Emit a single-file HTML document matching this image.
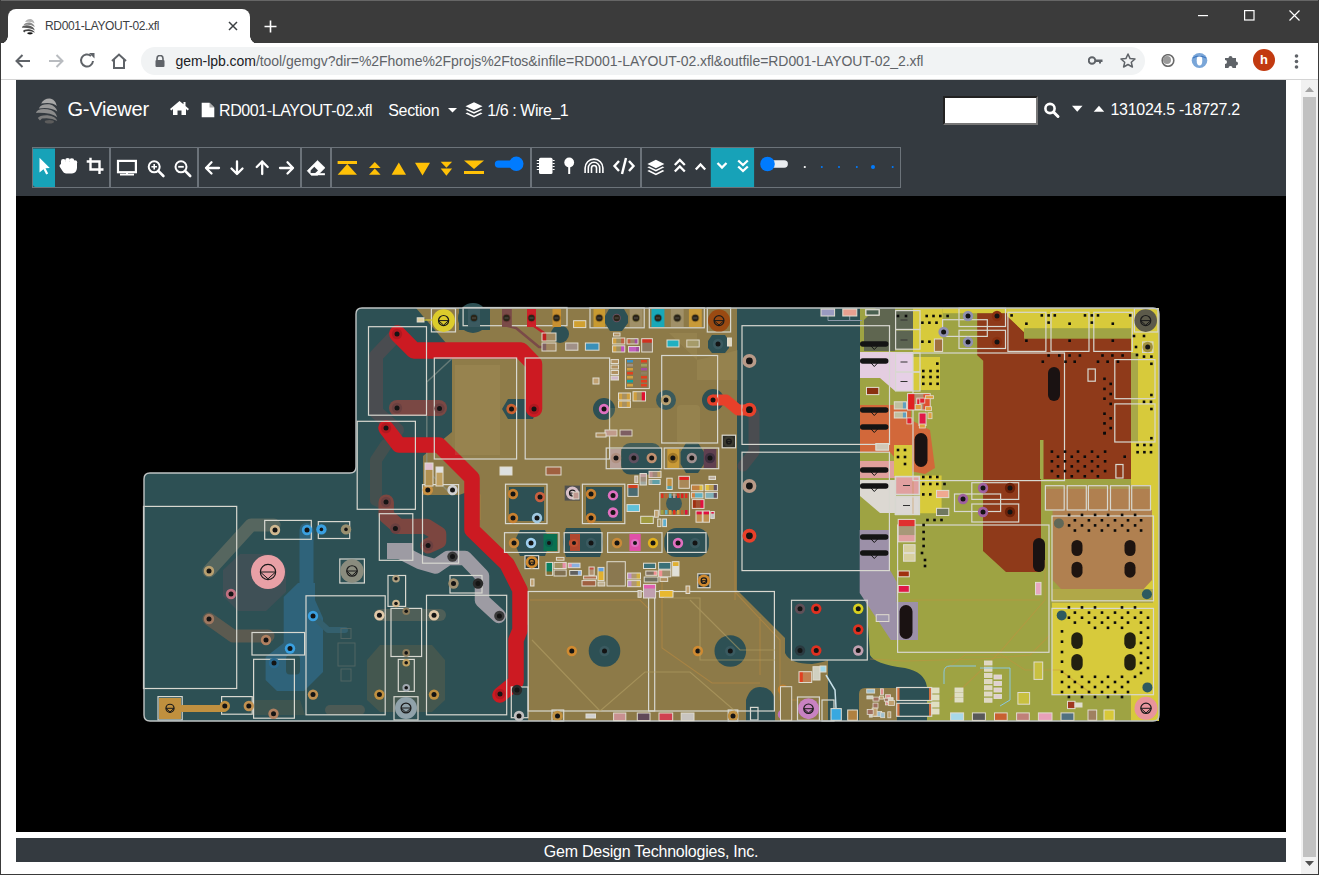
<!DOCTYPE html>
<html><head><meta charset="utf-8">
<style>
*{margin:0;padding:0;box-sizing:border-box}
html,body{width:1319px;height:875px;overflow:hidden;background:#fff;font-family:"Liberation Sans",sans-serif}
.a{position:absolute}
#frame{position:absolute;left:0;top:0;width:1319px;height:875px;border:1px solid #3a3a3a;border-top:none;pointer-events:none}
#tabbar{position:absolute;left:0;top:0;width:1319px;height:43px;background:#3b3b3b;border-top:1px solid #666}
#tab{position:absolute;left:8px;top:8px;width:242px;height:35px;background:#fff;border-radius:8px 8px 0 0}
#tab:before,#tab:after{content:"";position:absolute;bottom:0;width:8px;height:8px;background:radial-gradient(circle at 0 0,transparent 8px,#fff 8.5px)}
#tab:before{left:-8px;background:radial-gradient(circle at 0 0,transparent 7.5px,#fff 8px)}
#tab:after{right:-8px;background:radial-gradient(circle at 100% 0,transparent 7.5px,#fff 8px)}
#toolbar{position:absolute;left:0;top:43px;width:1319px;height:37px;background:#fff;border-bottom:1px solid #d4d4d4}
#omni{position:absolute;left:141px;top:4px;width:1004px;height:28px;background:#f1f3f4;border-radius:14px}
#url{position:absolute;left:34.5px;top:6px;font-size:14px;color:#5f6368;white-space:nowrap;letter-spacing:-0.05px}
#url b{font-weight:normal;color:#202124}
#app{position:absolute;left:16px;top:80px;width:1270px;height:116px;background:#343a40;color:#fff}
#canvas{position:absolute;left:16px;top:196px;width:1270px;height:636px;background:#000;overflow:hidden}
#footer{position:absolute;left:16px;top:838px;width:1270px;height:24px;background:#343a40;color:#fff;font-size:16px;text-align:center;line-height:24px;letter-spacing:-0.23px}
#sb{position:absolute;left:1301px;top:80px;width:17px;height:794px;background:#f1f1f1}
#thumb{position:absolute;left:1303px;top:97px;width:13px;height:760px;background:#c1c1c1}
.t{position:absolute;white-space:nowrap}
#tb{position:absolute;left:32px;top:147px;width:869px;height:41px;border:1px solid #6c737a}
.grp{position:absolute;top:0;height:39px;border-left:1px solid #6c737a}
.act{position:absolute;top:0;height:39px;background:#17a2b8}
</style></head>
<body>
<div id="tabbar">
  <div id="tab">
    <svg class="a" style="left:7px;top:4px" width="30" height="28" viewBox="0 0 30 28">
      <path d="M10,9 Q12,5.5 16,6 Q19,7 19.5,10.5 Q17,8 10,9 Z" fill="#b4b4b4"/>
      <path d="M8.6,12 Q10,9 15,9.5 Q19,10.5 19.8,14 Q16,11 8.6,12 Z" fill="#8a8a8a"/>
      <path d="M6.9,14.8 Q7.5,11.8 14,12.5 Q19,13.5 19.8,17.5 Q16,14.5 6.9,14.8 Z" fill="#5a5a5a"/>
      <path d="M8,18 Q9,16 14,16.2 Q19,16.8 19.8,19.8 Q16,17.5 10.5,18.3 L9.3,19.5 Z" fill="#444"/>
      <ellipse cx="15" cy="20.3" rx="2.8" ry="1.1" fill="#151515"/>
    </svg>
    <div class="t" style="left:37px;top:10px;font-size:12px;color:#3c4043;letter-spacing:-0.34px">RD001-LAYOUT-02.xfl</div>
    <svg class="a" style="left:220px;top:12px" width="10" height="10" viewBox="0 0 10 10"><path d="M1,1 L9,9 M9,1 L1,9" stroke="#3c4043" stroke-width="1.5"/></svg>
  </div>
  <svg class="a" style="left:264px;top:19px" width="13" height="13" viewBox="0 0 13 13"><path d="M6.5,0.5 V12.5 M0.5,6.5 H12.5" stroke="#fff" stroke-width="1.6"/></svg>
  <svg class="a" style="left:1198px;top:13px" width="10" height="3"><rect x="0" y="1" width="10" height="1.2" fill="#fff"/></svg>
  <svg class="a" style="left:1244px;top:9px" width="11" height="11"><rect x="0.6" y="0.6" width="9.4" height="9.4" fill="none" stroke="#fff" stroke-width="1.2"/></svg>
  <svg class="a" style="left:1289px;top:9px" width="11" height="11"><path d="M0.5,0.5 L10.5,10.5 M10.5,0.5 L0.5,10.5" stroke="#fff" stroke-width="1.2"/></svg>
</div>
<div id="toolbar">
  <svg class="a" style="left:14px;top:10px" width="18" height="16" viewBox="0 0 18 16"><path d="M16,8 H2.5 M8.5,2 L2.5,8 L8.5,14" fill="none" stroke="#5f6368" stroke-width="2"/></svg>
  <svg class="a" style="left:47px;top:10px" width="18" height="16" viewBox="0 0 18 16"><path d="M2,8 H15.5 M9.5,2 L15.5,8 L9.5,14" fill="none" stroke="#b9bcc0" stroke-width="2"/></svg>
  <svg class="a" style="left:79px;top:9px" width="17" height="17" viewBox="0 0 17 17"><path d="M14,9 A6,6 0 1 1 12,4" fill="none" stroke="#5f6368" stroke-width="2"/><path d="M10,1 L15.5,1 L15.5,6.5 Z" fill="#5f6368"/></svg>
  <svg class="a" style="left:110px;top:9px" width="18" height="18" viewBox="0 0 18 18"><path d="M2,9 L9,2.5 L16,9 M4,7.5 V16 H14 V7.5" fill="none" stroke="#5f6368" stroke-width="2" stroke-linejoin="miter"/></svg>
  <div id="omni">
    <svg class="a" style="left:13.5px;top:8px" width="10" height="12" viewBox="0 0 10 12"><path d="M2,5 V3.5 A3,3 0 0 1 8,3.5 V5" fill="none" stroke="#5f6368" stroke-width="1.6"/><rect x="0.5" y="5" width="9" height="7" rx="1" fill="#5f6368"/></svg>
    <div id="url"><b>gem-lpb.com</b>/tool/gemgv?dir=%2Fhome%2Fprojs%2Ftos&amp;infile=RD001-LAYOUT-02.xfl&amp;outfile=RD001-LAYOUT-02_2.xfl</div>
    <svg class="a" style="left:947px;top:9px" width="15" height="9" viewBox="0 0 15 9"><circle cx="4" cy="4.5" r="3.3" fill="none" stroke="#5f6368" stroke-width="2"/><path d="M7,3.5 H14.5 V6 H13 V7.5 H11 V6 H7Z" fill="#5f6368"/></svg>
    <svg class="a" style="left:979px;top:6px" width="16" height="15" viewBox="0 0 16 15"><path d="M8,1 L10.1,5.6 L15,6 L11.3,9.3 L12.4,14 L8,11.5 L3.6,14 L4.7,9.3 L1,6 L5.9,5.6 Z" fill="none" stroke="#5f6368" stroke-width="1.5" stroke-linejoin="round"/></svg>
  </div>
  <svg class="a" style="left:1161px;top:11px" width="14" height="13" viewBox="0 0 14 13"><circle cx="7" cy="6.5" r="5.8" fill="none" stroke="#6a6a6a" stroke-width="1.6"/><circle cx="6" cy="6" r="4" fill="#9a9a9a"/></svg>
  <svg class="a" style="left:1191px;top:9px" width="17" height="17" viewBox="0 0 17 17"><ellipse cx="8.5" cy="8.5" rx="7.8" ry="7.5" fill="#7aa6d8"/><ellipse cx="8.5" cy="8.5" rx="2.8" ry="5" fill="#fff"/><path d="M2,6 Q8,2 15,6" fill="none" stroke="#3f78c0" stroke-width="1.2"/></svg>
  <svg class="a" style="left:1224px;top:10px" width="16" height="16" viewBox="0 0 16 16"><path d="M1,5 H4.5 A2,2 0 1 1 8.5,5 H12 V8.5 A2,2 0 1 1 12,12.5 V15 H8.5 A2,2 0 1 0 4.5,15 H1 V11 A2,2 0 1 0 1,7Z" fill="#5f6368"/></svg>
  <div class="a" style="left:1253px;top:6px;width:22px;height:22px;border-radius:11px;background:#c23a10;color:#fff;font-size:13px;font-weight:bold;text-align:center;line-height:22px">h</div>
  <svg class="a" style="left:1294px;top:11px" width="5" height="15" viewBox="0 0 5 15"><circle cx="2.5" cy="2" r="1.8" fill="#5f6368"/><circle cx="2.5" cy="7.5" r="1.8" fill="#5f6368"/><circle cx="2.5" cy="13" r="1.8" fill="#5f6368"/></svg>
</div>
<div id="app">
<svg class="a" style="left:0;top:0" width="70" height="50" viewBox="0 0 70 50">
 <g transform="translate(20,18.5) scale(1.65,1.62) translate(-6.9,-5.9)">
      <path d="M10,9 Q12,5.5 16,6 Q19,7 19.5,10.5 Q17,8 10,9 Z" fill="#a8a8a8"/>
      <path d="M8.6,12 Q10,9 15,9.5 Q19,10.5 19.8,14 Q16,11 8.6,12 Z" fill="#9a9a9a"/>
      <path d="M6.9,14.8 Q7.5,11.8 14,12.5 Q19,13.5 19.8,17.5 Q16,14.5 6.9,14.8 Z" fill="#8c8c8c"/>
      <path d="M8,18 Q9,16 14,16.2 Q19,16.8 19.8,19.8 Q16,17.5 10.5,18.3 L9.3,19.5 Z" fill="#7c7c7c"/>
      <ellipse cx="15" cy="20.3" rx="2.8" ry="1.1" fill="#5c5c5c"/>
 </g>
</svg>
<div class="t" style="left:51.5px;top:17.6px;font-size:20px;line-height:23px;color:#fff;letter-spacing:-0.2px">G-Viewer</div>
<div class="t" style="left:203px;top:21.5px;font-size:16px;line-height:18.4px;color:#fff;letter-spacing:-0.4px">RD001-LAYOUT-02.xfl</div>
<div class="t" style="left:372.3px;top:21.5px;font-size:16px;line-height:18.4px;color:#fff;letter-spacing:-0.35px">Section</div>
<div class="t" style="left:471.3px;top:21.5px;font-size:16px;line-height:18.4px;color:#fff;letter-spacing:-0.44px">1/6 : Wire_1</div>
<div class="t" style="left:1094.5px;top:21.3px;font-size:16px;line-height:18.4px;color:#fff;letter-spacing:-0.3px">131024.5 -18727.2</div>
<div class="a" style="left:926.5px;top:15.5px;width:95.5px;height:29.5px;background:#fff;border-top:2px solid #222;border-left:2px solid #222;border-bottom:2px solid #777;border-right:2px solid #777"></div>
<svg class="a" style="left:0;top:0" width="1270" height="116" viewBox="0 0 1270 116">
 <!-- header icons -->
 <path d="M163.5,21 L154,29 L155.3,30.5 L157,29.1 V35 H161.5 V30.5 H165.5 V35 H170 V29.1 L171.7,30.5 L173,29 L169.5,26 V22 H167.5 V24.3Z" fill="#fff"/>
 <path d="M185.7,22.7 H193.5 L198.3,27.5 V37.3 H185.7Z" fill="#fff"/><path d="M193.5,22.7 V27.5 H198.3" fill="#aaa" />
 <path d="M432,28 H441 L436.5,32.5Z" fill="#fff"/>
 <path d="M458,22.3 L466.5,26.3 L458,30.3 L449.5,26.3Z" fill="#fff"/>
 <path d="M451.2,28.9 L449.5,29.8 L458,33.8 L466.5,29.8 L464.8,28.9 L458,32.1Z" fill="#fff"/>
 <path d="M451.2,32.5 L449.5,33.4 L458,37.4 L466.5,33.4 L464.8,32.5 L458,35.7Z" fill="#fff"/>
 <circle cx="1034" cy="28.5" r="4.6" fill="none" stroke="#fff" stroke-width="2.6"/><path d="M1037.5,32 L1042,36.5" stroke="#fff" stroke-width="3" stroke-linecap="round"/>
 <path d="M1056,25.7 H1066.5 L1061.25,31.7Z" fill="#fff"/>
 <path d="M1077.7,31.7 H1088.2 L1083,25.7Z" fill="#fff"/>

 <!-- toolbar frame -->
 <rect x="16.5" y="67.5" width="868" height="40" fill="none" stroke="#6c737a" stroke-width="1"/>
 <path d="M17,68.5 H39 V107 H19.5 Q17,107 17,104.5 Z" fill="#17a2b8"/>
 <rect x="694.8" y="68" width="43.3" height="39" fill="#17a2b8"/>
 <g stroke="#6c737a" stroke-width="1">
  <path d="M93.5,67.5 V107.5 M94.5,67.5 V107.5 M181.5,67.5 V107.5 M182.5,67.5 V107.5 M284.5,67.5 V107.5 M285.5,67.5 V107.5 M314.5,67.5 V107.5 M315.5,67.5 V107.5 M514.5,67.5 V107.5 M515.5,67.5 V107.5 M624.5,67.5 V107.5 M625.5,67.5 V107.5"/>
 </g>
 <g fill="#fff">
  <!-- cursor -->
  <path d="M23.5,77.7 L33.8,88 L29.5,88.3 L32.2,93.5 L30.2,94.5 L27.5,89.2 L23.5,92.5Z"/>
  <!-- hand -->
  <circle cx="47.3" cy="81.3" r="2.3"/><circle cx="51.6" cy="80.4" r="2.4"/><circle cx="55.8" cy="80.6" r="2.4"/><circle cx="59" cy="82.3" r="2.1"/>
  <path d="M45,81.5 H61 V88 Q60.5,93.4 56,93.4 H50 Q47.5,93.4 46.5,91 L43.6,86.5 Q43,84.5 45,84 Z"/>
  </g>
 <g fill="none" stroke="#fff" stroke-width="2.4">
  <!-- crop -->
  <path d="M74.5,77.7 V89.5 H87.5 M70.7,81.5 H83.5 V94"/>
  <!-- desktop -->
  <rect x="102" y="80.9" width="17.9" height="11.3" stroke-width="2.2"/>
 </g>
 <rect x="104" y="93.7" width="14" height="1.8" fill="#fff"/><rect x="110" y="92" width="2" height="2" fill="#fff"/>
 <g fill="none" stroke="#fff" stroke-width="2">
  <circle cx="138.2" cy="86.8" r="5.5"/><path d="M142.3,90.9 L147.4,96" stroke-width="2.6" stroke-linecap="round"/>
  <path d="M135.4,86.8 H141 M138.2,84 V89.6" stroke-width="1.6"/>
  <circle cx="165" cy="86.8" r="5.5"/><path d="M169.1,90.9 L174.2,96" stroke-width="2.6" stroke-linecap="round"/>
  <path d="M162.2,86.8 H167.8" stroke-width="1.8"/>
 </g>
 <g fill="none" stroke="#fff" stroke-width="2.3" stroke-linecap="round" stroke-linejoin="round">
  <path d="M203,88 H190 M195.5,82.3 L190,88 L195.5,93.5"/>
  <path d="M221,81.5 V94 M215.5,88.5 L221,94 L226.5,88.5"/>
  <path d="M246.2,94 V81.5 M240.7,87 L246.2,81.5 L251.7,87"/>
  <path d="M264,88 H277 M271.5,82.3 L277,88 L271.5,93.5"/>
 </g>
 <!-- eraser -->
 <path d="M301.5,80.4 L309,87.8 L301.6,95.2 L295.3,95.2 L291.2,90.8 Z" fill="#fff" stroke="#fff" stroke-width="0.6" stroke-linejoin="round"/>
 <path d="M298.3,86.8 L302,90.6 L299,93.3 L294.6,93.3 L294.6,90.6 Z" fill="#343a40"/>
 <rect x="295" y="93.2" width="13.9" height="2" fill="#fff"/>
 <!-- yellow group -->
 <g fill="#ffc107">
  <rect x="321.6" y="81" width="19.4" height="3"/><path d="M331.3,84 L341,94.7 H321.6Z"/>
  <path d="M358.8,82 L364.6,88 H353Z"/><path d="M358.8,88.5 L364.6,94.7 H353Z"/>
  <path d="M382.8,82.5 L390,94.7 H375.6Z"/>
  <path d="M399,82.7 H414 L406.5,95.4Z"/>
  <path d="M424.7,81.8 H436.1 L430.4,87.8Z"/><path d="M424.7,88.6 H436.1 L430.4,95.8Z"/>
  <path d="M448,80.4 H468 L458,89 Z"/><rect x="448" y="91" width="20" height="3"/>
 </g>
 <rect x="478.8" y="80.4" width="21" height="7.3" rx="3.6" fill="#007bff"/><circle cx="500.3" cy="83.8" r="7.2" fill="#007bff"/>
 <!-- chip -->
 <rect x="523" y="77.7" width="13.5" height="16.3" rx="1.5" fill="#fff"/>
 <g stroke="#fff" stroke-width="1.2"><path d="M520.8,80.5 H523 M520.8,83.5 H523 M520.8,86.5 H523 M520.8,89.5 H523 M536.5,80.5 H538.6 M536.5,83.5 H538.6 M536.5,86.5 H538.6 M536.5,89.5 H538.6"/></g>
 <!-- pin -->
 <circle cx="553.2" cy="82.5" r="4.9" fill="#fff"/><rect x="552.2" y="86.5" width="2" height="7.5" fill="#fff"/>
 <!-- rainbow -->
 <g fill="none" stroke="#fff" stroke-width="1.6">
  <path d="M569.1,93.1 V88 A8.9,8.9 0 0 1 586.9,88 V93.1"/>
  <path d="M572.3,93.1 V88 A5.7,5.7 0 0 1 583.7,88 V93.1"/>
  <path d="M575.5,93.1 V88 A2.5,2.5 0 0 1 580.5,88 V93.1"/>
 </g>
 <!-- code -->
 <g fill="none" stroke="#fff" stroke-width="2.4" stroke-linejoin="miter">
  <path d="M603,81 L598.5,86 L603,91"/><path d="M613,81 L617.5,86 L613,91"/><path d="M610,78 L606,94"/>
 </g>
 <!-- layers -->
 <path d="M639.9,79.7 L648.4,84 L639.9,88.3 L631.4,84Z" fill="#fff"/>
 <path d="M633.1,86.4 L631.3,87.3 L639.9,91.6 L648.4,87.3 L646.6,86.4 L639.9,89.8Z" fill="#fff"/>
 <path d="M633.1,90 L631.3,90.9 L639.9,95.2 L648.4,90.9 L646.6,90 L639.9,93.4Z" fill="#fff"/>
 <g fill="none" stroke="#fff" stroke-width="2.3" stroke-linejoin="miter">
  <path d="M658.8,85 L663.8,80 L668.8,85 M658.8,91.5 L663.8,86.5 L668.8,91.5"/>
  <path d="M679.8,89.5 L684.5,84.5 L689.2,89.5"/>
  <path d="M701.5,83 L706,87.5 L710.5,83"/>
  <path d="M722.2,80.5 L727,85 L731.8,80.5 M722.2,86.5 L727,91 L731.8,86.5"/>
 </g>
 <rect x="750.9" y="80.3" width="21" height="7.5" rx="3.7" fill="#e9ecef"/><circle cx="751.5" cy="84" r="7.3" fill="#007bff"/>
 <circle cx="788.8" cy="87" r="1.1" fill="#fff"/>
 <g fill="#007bff"><circle cx="805.8" cy="87" r="1"/><circle cx="823" cy="87" r="1"/><circle cx="840.8" cy="87" r="1"/><circle cx="857" cy="87" r="2"/><circle cx="876.7" cy="87" r="1"/></g>
</svg>

</div>
<div id="canvas"></div>
<svg id="pcb" width="1319" height="875" viewBox="0 0 1319 875" style="position:absolute;left:0;top:0">
<path d="M362,308 L1153,308 Q1159,308 1159,314 L1159,715 Q1159,721 1153,721 L150,721 Q144,721 144,715 L144,479 Q144,473 150,473 L350,473 Q356,473 356,467 L356,314 Q356,308 362,308 Z" fill="#2d5054" stroke="none" stroke-width="0" />
<path d="M209,571 L251,525 L274,525" fill="none" stroke="#56665f" stroke-width="13" stroke-linecap="round" stroke-linejoin="round" opacity="1"/>
<path d="M209,619 L233,636 L268,636" fill="none" stroke="#5b5a50" stroke-width="13" stroke-linecap="round" stroke-linejoin="round" opacity="1"/>
<polygon points="240,554 272,554 286,568 286,592 266,611 238,611 223,596 223,570" fill="#3f5056" />
<path d="M306.5,530 L306.5,586 L291,601 L291,640" fill="none" stroke="#2f637a" stroke-width="14" stroke-linecap="round" stroke-linejoin="round" opacity="1"/>
<path d="M298,583 L315,583 L315,600 L323,618 L323,672 L304,691 L277,691 L265.6,680 L265.6,657 L283.7,643 L283.7,597 Z" fill="#2f637a"/>
<rect x="286" y="655" width="14" height="19.5" fill="#2d5054" rx="4"/>
<polygon points="380,645 432,645 445,660 445,700 432,712 380,712 367,700 367,660" fill="#44574f" />
<path d="M313,616 L328,630 L345,630" fill="none" stroke="#34606e" stroke-width="6" stroke-linecap="round" stroke-linejoin="round" opacity="1"/>
<path d="M397,334 L376,356 L376,412 L397,430" fill="none" stroke="#4a4c50" stroke-width="14" stroke-linecap="round" stroke-linejoin="round" opacity="1"/>
<path d="M386,445 L376,460 L376,500 L386,505" fill="none" stroke="#44504f" stroke-width="12" stroke-linecap="round" stroke-linejoin="round" opacity="1"/>
<path d="M330,710 L360,710" fill="none" stroke="#4c5a55" stroke-width="10" stroke-linecap="round" stroke-linejoin="round" opacity="1"/>
<polygon points="250,700 300,700 305,715 250,715" fill="#3e5550" />
<path d="M416,308 L737,308 L737,590 L785,638 L785,653 Q790,664 812,664 Q825,662 828,660 L828,721 L528,721 L528,625 L516,621 L520,590 L507,564 L472,530 L473,490 L459,495 L423,495 L423,456 L452,432 L452,350 Z" fill="#8d7a48" stroke="none" stroke-width="0" />
<polygon points="452,360 516,360 516,458 452,458" fill="#8f7c49" />
<circle cx="473" cy="318" r="15" fill="#2d5054" />
<rect x="459" y="308" width="31" height="22" fill="#2d5054" />
<path d="M508,399 L533,399 L537,409 L533,419 L508,419 L502,409 Z" fill="#2d5054" stroke="none" stroke-width="0" />
<circle cx="604" cy="409" r="11" fill="#2d5054" />
<circle cx="666" cy="400" r="10" fill="#3a5a5c" />
<circle cx="713" cy="400" r="11" fill="#2d5054" />
<path d="M712,335 L725,335 L729,341 L729,348 L725,353 L712,353 L708,348 L708,341 Z" fill="#2d5054" stroke="none" stroke-width="0" />
<circle cx="560" cy="334" r="9" fill="#2d5054" />
<rect x="610" y="449" width="11.2" height="19" fill="#b8a098" />
<rect x="621.2" y="443" width="40.1" height="31.6" fill="#2d5054" rx="9"/>
<rect x="667.3" y="449" width="11.9" height="19" fill="#c89a38" />
<path d="M686,443 L698,443 L704,452 L704,464 L698,473 L686,473 L680.6,464 L680.6,452 Z" fill="#2d5054" stroke="none" stroke-width="0" />
<rect x="703.7" y="449" width="12.6" height="19" fill="#604050" />
<rect x="509" y="487" width="35" height="34" fill="#2d5054" />
<rect x="586" y="487" width="36" height="34" fill="#2d5054" />
<path d="M520,530 L545,530 L550,542 L545,556 L520,556 L514,542 Z" fill="#2d5054" stroke="none" stroke-width="0" />
<path d="M566,528 L600,528 Q606,542 600,557 L566,557 Q560,542 566,528 Z" fill="#2d5054" stroke="none" stroke-width="0" />
<rect x="664.3" y="528" width="44.6" height="29" fill="#2d5054" rx="12"/>
<circle cx="604.5" cy="651" r="15.8" fill="#2d5054" />
<circle cx="730.3" cy="651" r="15.8" fill="#2d5054" />
<path d="M746,721 L746,700 Q750,687 760,687 Q772,687 775,700 L775,721 Z" fill="#2d5054" stroke="none" stroke-width="0" />
<rect x="426" y="498" width="30" height="64" fill="#2d5054" />
<path d="M863,308 L1159,308 L1159,721 L927,721 L927,687 Q925,672 905,668 Q874,664 870,655 L866,596 L860,580 L860,308 Z" fill="#9ea343" stroke="none" stroke-width="0" />
<path d="M859,721 L859,694 Q859,688 865,688 L897,688 L897,721 Z" fill="#8d7a48" stroke="none" stroke-width="0" />
<polygon points="876,308 895,308 895,351 864,351 864,320" fill="#5f6650" />
<polygon points="860,352 913,352 913,391 895,391 880,378 860,378" fill="#e4cde0" />
<polygon points="860,405 911,405 911,420 930,430 935,468 925,474 905,470 890,452 860,452" fill="#d2683a" />
<polygon points="860,461 900,461 905,470 905,478 860,478" fill="#e0a09c" />
<polygon points="860,480 896,480 896,513 880,513 860,496" fill="#dcd8d2" />
<polygon points="859.7,530 889.9,530 889.9,570 896.7,582 896.7,602 918,602 918,640 890.8,640 859.7,593" fill="#9c90a8" />
<rect x="913" y="308" width="29.6" height="44" fill="#d7ca3b" />
<rect x="942.6" y="308" width="64.6" height="5.2" fill="#d7ca3b" />
<rect x="895.7" y="310.6" width="17.3" height="18.9" fill="#5c6552" />
<rect x="895.7" y="330.5" width="17.3" height="19.0" fill="#5c6552" />
<rect x="895.7" y="353" width="17.3" height="18.5" fill="#e6d0e6" />
<rect x="895.7" y="372.5" width="17.3" height="18.5" fill="#e6d0e6" />
<path d="M900.5,320 H907.5 M900.5,340 H907.5 M900.5,362 H907.5 M900.5,381.5 H907.5" stroke="#333" stroke-width="1"/>
<rect x="913" y="357" width="27" height="33" fill="#d7ca3b" />
<polygon points="894,445 912,445 912,475.6 941.6,475.6 941.6,513.3 919.5,513.3 919.5,476 894,476" fill="#d7ca3b" />
<rect x="895.6" y="476.4" width="23.9" height="18.1" fill="#e0a0a0" />
<rect x="895.6" y="496.2" width="23.9" height="18.4" fill="#dcd8d4" />
<rect x="895.6" y="476.4" width="23.9" height="18.1" fill="none" stroke="#d8d8d0" stroke-width="1.2"/>
<rect x="895.6" y="496.2" width="23.9" height="18.4" fill="none" stroke="#d8d8d0" stroke-width="1.2"/>
<path d="M903,485.5 H910 M903,505.5 H910" stroke="#333" stroke-width="1"/>
<polygon points="977.2,313.2 1007.2,313.2 1007.2,316 1024,332 1024,338.4 1131,338.4 1131,479 1041,479 1041,572 1006,572 983,551 983.2,360.8 977.2,355.2" fill="#8f3a1a" />
<polygon points="1007.2,308 1159,308 1159,353 1131,353 1131,328.4 1024,328.4 1024,332 1007.2,316" fill="#d7ca3b" />
<rect x="1024" y="328.4" width="107" height="10.0" fill="#a0a444" />
<rect x="1131" y="353" width="28" height="126" fill="#d7ca3b" />
<rect x="1131" y="353" width="7" height="89" fill="#a8a848" />
<rect x="1131" y="479" width="28" height="242" fill="#d7ca3b" />
<rect x="1041" y="479" width="11.6" height="121" fill="#9ea343" />
<rect x="1045" y="485" width="106" height="25" fill="#b08050" />
<rect x="1045" y="485" width="106" height="4" fill="#a89850" />
<polygon points="1052.6,510 1152,510 1152,580 1143,589.7 1061.7,589.7 1052.6,580" fill="#b08050" />
<rect x="1052" y="603" width="101" height="91" fill="#d7ca3b" />
<rect x="1052" y="589" width="101" height="14" fill="#b0a848" />
<rect x="914.5" y="433.0" width="13" height="34" rx="6.5" fill="#1a1212"/>
<rect x="1048.0" y="367.0" width="12" height="34" rx="6.0" fill="#1a1212"/>
<rect x="1033.0" y="538.0" width="12" height="34" rx="6.0" fill="#1a1212"/>
<rect x="899.5" y="605.0" width="13" height="34" rx="6.5" fill="#1a1212"/>
<rect x="1071.5" y="540" width="11" height="16" rx="5.5" fill="#1e1410"/>
<rect x="1071.5" y="561.7" width="11" height="16" rx="5.5" fill="#1e1410"/>
<rect x="1071.3" y="632.3000000000001" width="11.4" height="16.6" rx="5.7" fill="#222010"/>
<rect x="1071.3" y="654.0" width="11.4" height="16.6" rx="5.7" fill="#222010"/>
<rect x="1124.5" y="540" width="11" height="16" rx="5.5" fill="#1e1410"/>
<rect x="1124.5" y="561.7" width="11" height="16" rx="5.5" fill="#1e1410"/>
<rect x="1124.3" y="632.3000000000001" width="11.4" height="16.6" rx="5.7" fill="#222010"/>
<rect x="1124.3" y="654.0" width="11.4" height="16.6" rx="5.7" fill="#222010"/>
<rect x="860" y="341.3" width="28.5" height="5.4" rx="2.7" fill="#141414"/>
<path d="M871,346 L874.3,349.5 L877.6,346" fill="none" stroke="#141414" stroke-width="1"/>
<rect x="860" y="358.3" width="28.5" height="5.4" rx="2.7" fill="#141414"/>
<path d="M871,363 L874.3,366.5 L877.6,363" fill="none" stroke="#141414" stroke-width="1"/>
<rect x="860" y="407.3" width="28.5" height="5.4" rx="2.7" fill="#141414"/>
<path d="M871,412 L874.3,415.5 L877.6,412" fill="none" stroke="#141414" stroke-width="1"/>
<rect x="860" y="424.3" width="28.5" height="5.4" rx="2.7" fill="#141414"/>
<path d="M871,429 L874.3,432.5 L877.6,429" fill="none" stroke="#141414" stroke-width="1"/>
<rect x="860" y="467.3" width="28.5" height="5.4" rx="2.7" fill="#141414"/>
<path d="M871,472 L874.3,475.5 L877.6,472" fill="none" stroke="#141414" stroke-width="1"/>
<rect x="860" y="483.3" width="28.5" height="5.4" rx="2.7" fill="#141414"/>
<path d="M871,488 L874.3,491.5 L877.6,488" fill="none" stroke="#141414" stroke-width="1"/>
<rect x="860" y="534.3" width="28.5" height="5.4" rx="2.7" fill="#141414"/>
<path d="M871,539 L874.3,542.5 L877.6,539" fill="none" stroke="#141414" stroke-width="1"/>
<rect x="860" y="550.3" width="28.5" height="5.4" rx="2.7" fill="#141414"/>
<path d="M871,555 L874.3,558.5 L877.6,555" fill="none" stroke="#141414" stroke-width="1"/>
<path d="M451.5,359 L426.8,382 L426.8,470 L452,495" fill="none" stroke="#8a968e" stroke-width="1.5" opacity="0.6"/>
<g fill="none" stroke="#c89040" stroke-width="1.1" opacity="0.45">
<path d="M870,659 L905,661 L980,659 L1030,655 L1050,635"/>
<path d="M945,670 L965,655 L1002,655 L1025,670 L1060,670 L1100,700"/>
<path d="M950,700 L1000,652 L1045,600 L1045,560"/>
<path d="M735,560 L735,600 M760,617 L760,675 M735,592 L780,640 L780,700 L800,700"/>
<path d="M900,600 L980,600 L1040,600 M913,480 L913,525"/>
<path d="M455,470 L480,495 L480,520 M530,600 L640,600 L650,610 M662,580 L662,648 L712,683 L760,683"/>
</g>
<path d="M508,326 L516,328 L539,347 L545,347" fill="none" stroke="#7a4a48" stroke-width="2.5" stroke-linecap="round" stroke-linejoin="round" opacity="1"/>
<path d="M534,326 L544,333" fill="none" stroke="#c02028" stroke-width="2.5" stroke-linecap="round" stroke-linejoin="round" opacity="1"/>
<path d="M754,414 L754,452 L743,466" fill="none" stroke="#4a4c50" stroke-width="11" stroke-linecap="round" stroke-linejoin="round" opacity="1"/>
<path d="M828,316 V320.5 H862 M849.7,316 V320.5" fill="none" stroke="#8a98a8" stroke-width="1"/>
<path d="M380,615 L440,615" fill="none" stroke="#4f5f58" stroke-width="12" stroke-linecap="round" stroke-linejoin="round" opacity="1"/>
<g fill="none" stroke="#5a6a66" stroke-width="1" opacity="0.8"><rect x="341" y="628.5" width="10" height="10"/><rect x="338" y="643" width="17" height="23"/><rect x="341" y="669" width="10" height="12"/></g>
<path d="M397.3,333.6 L414,350.5 L521,350.5 L534,364 L534,409" fill="none" stroke="#cc1a22" stroke-width="16.5" stroke-linecap="round" stroke-linejoin="round" opacity="1"/>
<path d="M386,428 L399,445 L439,445 L472,478 L472,530 L507,564 L520,590 L520,630 L516,640 L516,682 L500,695" fill="none" stroke="#cc1a22" stroke-width="15.5" stroke-linecap="round" stroke-linejoin="round" opacity="1"/>
<path d="M712.5,400 L726,400 L738,410 L749,410" fill="none" stroke="#e8402a" stroke-width="11" stroke-linecap="round" stroke-linejoin="round" opacity="1"/>
<path d="M397,408 L439,408" fill="none" stroke="#7a4844" stroke-width="16" stroke-linecap="round" stroke-linejoin="round" opacity="1"/>
<path d="M386.2,502.3 L386.2,515.6 L398.5,526.4 L426.3,526.4 L438.6,534 L438.6,541 L428,545.8" fill="none" stroke="#7c4640" stroke-width="15.4" stroke-linecap="round" stroke-linejoin="round" opacity="1"/>
<rect x="387" y="543" width="26" height="16" fill="#9d9ba3" />
<path d="M398.5,551 L420,562 L435.6,566.5 L448,558 L465,558 L482,575.7 L482,600.4 L498.8,615.9" fill="none" stroke="#9d9ba3" stroke-width="14.5" stroke-linecap="round" stroke-linejoin="round" opacity="1"/>
<rect x="368.5" y="326.7" width="58.0" height="88.5" fill="none" stroke="#d8d8d0" stroke-width="1.2"/>
<rect x="357.2" y="421.3" width="58.2" height="88.0" fill="none" stroke="#d8d8d0" stroke-width="1.2"/>
<rect x="434.3" y="358" width="82.3" height="101" fill="none" stroke="#d8d8d0" stroke-width="1.2"/>
<rect x="525.2" y="358" width="84.4" height="101" fill="none" stroke="#d8d8d0" stroke-width="1.2"/>
<rect x="661.7" y="355.5" width="55.9" height="87.5" fill="none" stroke="#d8d8d0" stroke-width="1.2"/>
<rect x="742" y="325.7" width="147.5" height="118.7" fill="none" stroke="#d8d8d0" stroke-width="1.2"/>
<rect x="742" y="452.2" width="147.4" height="118.4" fill="none" stroke="#d8d8d0" stroke-width="1.2"/>
<rect x="463.1" y="307.5" width="103.9" height="18.2" fill="none" stroke="#d8d8d0" stroke-width="1.2"/>
<rect x="431.4" y="308.6" width="24.1" height="23.3" fill="none" stroke="#d8d8d0" stroke-width="1.2"/>
<rect x="590" y="307.8" width="54.2" height="20.0" fill="none" stroke="#d8d8d0" stroke-width="1.2"/>
<rect x="649.3" y="307.8" width="55.0" height="20.0" fill="none" stroke="#d8d8d0" stroke-width="1.2"/>
<rect x="707.3" y="308" width="23.3" height="24" fill="none" stroke="#d8d8d0" stroke-width="1.2"/>
<rect x="606.2" y="448" width="55.5" height="20.7" fill="none" stroke="#d8d8d0" stroke-width="1.2"/>
<rect x="664.2" y="448" width="54.5" height="20.7" fill="none" stroke="#d8d8d0" stroke-width="1.2"/>
<rect x="505.5" y="484.2" width="41.5" height="39.4" fill="none" stroke="#d8d8d0" stroke-width="1.2"/>
<rect x="582.4" y="484.2" width="42.4" height="39.4" fill="none" stroke="#d8d8d0" stroke-width="1.2"/>
<rect x="504.5" y="532.7" width="54.5" height="19.7" fill="none" stroke="#d8d8d0" stroke-width="1.2"/>
<rect x="564.2" y="532.7" width="37.8" height="19.7" fill="none" stroke="#d8d8d0" stroke-width="1.2"/>
<rect x="607.6" y="532.7" width="54.4" height="19.7" fill="none" stroke="#d8d8d0" stroke-width="1.2"/>
<rect x="667.6" y="532.7" width="38.4" height="19.7" fill="none" stroke="#d8d8d0" stroke-width="1.2"/>
<rect x="528.2" y="591.5" width="246.2" height="119.5" fill="none" stroke="#d8d8d0" stroke-width="1.2"/>
<rect x="648.6" y="591.5" width="6.1" height="119.5" fill="none" stroke="#d8d8d0" stroke-width="1.2"/>
<rect x="143.5" y="506.4" width="93.2" height="182.1" fill="none" stroke="#d8d8d0" stroke-width="1.2"/>
<rect x="264.7" y="520.4" width="46.6" height="18.9" fill="none" stroke="#d8d8d0" stroke-width="1.2"/>
<rect x="318.3" y="521.6" width="31.4" height="16.9" fill="none" stroke="#d8d8d0" stroke-width="1.2"/>
<rect x="306" y="595.8" width="79.2" height="119.0" fill="none" stroke="#d8d8d0" stroke-width="1.2"/>
<rect x="252" y="632.5" width="52.6" height="22.5" fill="none" stroke="#d8d8d0" stroke-width="1.2"/>
<rect x="253.6" y="659.3" width="40.8" height="58.9" fill="none" stroke="#d8d8d0" stroke-width="1.2"/>
<rect x="221.6" y="696.6" width="30.6" height="17.6" fill="none" stroke="#d8d8d0" stroke-width="1.2"/>
<rect x="158" y="696.6" width="24.2" height="23.4" fill="none" stroke="#d8d8d0" stroke-width="1.2"/>
<rect x="379.3" y="513.7" width="33.5" height="46.6" fill="none" stroke="#d8d8d0" stroke-width="1.2"/>
<rect x="422.5" y="484.6" width="36.1" height="78.6" fill="none" stroke="#d8d8d0" stroke-width="1.2"/>
<rect x="426.5" y="595.3" width="80.2" height="119.5" fill="none" stroke="#d8d8d0" stroke-width="1.2"/>
<rect x="391" y="608.4" width="30.6" height="48.1" fill="none" stroke="#d8d8d0" stroke-width="1.2"/>
<rect x="388" y="575.5" width="17.6" height="30.9" fill="none" stroke="#d8d8d0" stroke-width="1.2"/>
<rect x="450" y="575.5" width="32" height="17.5" fill="none" stroke="#d8d8d0" stroke-width="1.2"/>
<rect x="398.3" y="659.4" width="16.0" height="32.0" fill="none" stroke="#d8d8d0" stroke-width="1.2"/>
<rect x="394" y="696.7" width="24" height="23.3" fill="none" stroke="#d8d8d0" stroke-width="1.2"/>
<rect x="511.3" y="687" width="16.7" height="30.7" fill="none" stroke="#d8d8d0" stroke-width="1.2"/>
<rect x="791.5" y="600.3" width="75.8" height="59.7" fill="none" stroke="#d8d8d0" stroke-width="1.2"/>
<rect x="897.6" y="525" width="151.4" height="127.3" fill="none" stroke="#d8d8d0" stroke-width="1.2"/>
<rect x="1052" y="516" width="101.5" height="84.8" fill="none" stroke="#d8d8d0" stroke-width="1.2"/>
<rect x="1052" y="608.4" width="101.5" height="86.3" fill="none" stroke="#d8d8d0" stroke-width="1.2"/>
<rect x="1045.4" y="485.7" width="18.8" height="24.3" fill="none" stroke="#d8d8d0" stroke-width="1.2"/>
<rect x="1067.2" y="485.7" width="19.1" height="24.3" fill="none" stroke="#d8d8d0" stroke-width="1.2"/>
<rect x="1088.4" y="485.7" width="19.1" height="24.3" fill="none" stroke="#d8d8d0" stroke-width="1.2"/>
<rect x="1110.5" y="485.7" width="18.8" height="24.3" fill="none" stroke="#d8d8d0" stroke-width="1.2"/>
<rect x="1131.7" y="485.7" width="18.8" height="24.3" fill="none" stroke="#d8d8d0" stroke-width="1.2"/>
<rect x="1007.9" y="312.3" width="38.0" height="39.1" fill="none" stroke="#d8d8d0" stroke-width="1.2"/>
<rect x="1051" y="312.3" width="38" height="39.1" fill="none" stroke="#d8d8d0" stroke-width="1.2"/>
<rect x="1093.8" y="312.3" width="38.5" height="39.1" fill="none" stroke="#d8d8d0" stroke-width="1.2"/>
<rect x="1134.4" y="308.6" width="23.6" height="23.4" fill="none" stroke="#d8d8d0" stroke-width="1.2"/>
<rect x="1114.8" y="359.6" width="40.2" height="39.1" fill="none" stroke="#d8d8d0" stroke-width="1.2"/>
<rect x="1114.8" y="403.9" width="40.2" height="38.1" fill="none" stroke="#d8d8d0" stroke-width="1.2"/>
<rect x="913" y="353" width="151.5" height="127.6" fill="none" stroke="#d8d8d0" stroke-width="1.2"/>
<rect x="959" y="308.3" width="46.5" height="18.2" fill="none" stroke="#d8d8d0" stroke-width="1.2"/>
<rect x="942.6" y="319.7" width="44.7" height="16.7" fill="none" stroke="#d8d8d0" stroke-width="1.2"/>
<rect x="959" y="330.3" width="46.5" height="18.2" fill="none" stroke="#d8d8d0" stroke-width="1.2"/>
<rect x="866" y="309.8" width="13" height="5.2" fill="none" stroke="#d8d8d0" stroke-width="1.2"/>
<rect x="895.6" y="310.6" width="24.4" height="18.9" fill="none" stroke="#d8d8d0" stroke-width="1.2"/>
<rect x="895.6" y="329.5" width="24.4" height="19.7" fill="none" stroke="#d8d8d0" stroke-width="1.2"/>
<rect x="895.6" y="353" width="24.4" height="19" fill="none" stroke="#d8d8d0" stroke-width="1.2"/>
<rect x="895.6" y="372" width="24.4" height="19" fill="none" stroke="#d8d8d0" stroke-width="1.2"/>
<rect x="971.8" y="482.7" width="46.9" height="16.7" fill="none" stroke="#d8d8d0" stroke-width="1.2"/>
<rect x="954.5" y="494" width="46.1" height="17.5" fill="none" stroke="#d8d8d0" stroke-width="1.2"/>
<rect x="971.8" y="504" width="46.9" height="18" fill="none" stroke="#d8d8d0" stroke-width="1.2"/>
<rect x="895.2" y="476.8" width="24.0" height="17.6" fill="none" stroke="#d8d8d0" stroke-width="1.2"/>
<rect x="895.2" y="496.8" width="24.0" height="17.6" fill="none" stroke="#d8d8d0" stroke-width="1.2"/>
<rect x="876" y="443.7" width="12.5" height="6.3" fill="none" stroke="#d8d8d0" stroke-width="1.2"/>
<rect x="339.8" y="559" width="24.6" height="24" fill="none" stroke="#d8d8d0" stroke-width="1.2"/>
<rect x="750.5" y="707.4" width="7.5" height="12.6" fill="none" stroke="#d8d8d0" stroke-width="1.2"/>
<rect x="552" y="710" width="11.7" height="11" fill="none" stroke="#d8d8d0" stroke-width="1.2"/>
<rect x="728.2" y="710" width="9.6" height="11" fill="none" stroke="#d8d8d0" stroke-width="1.2"/>
<rect x="822" y="700" width="12" height="21" fill="none" stroke="#d8d8d0" stroke-width="1.2"/>
<rect x="797.5" y="697" width="21.9" height="23.3" fill="none" stroke="#d8d8d0" stroke-width="1.2"/>
<rect x="866" y="309.8" width="13" height="5.2" fill="none" stroke="#d8d8d0" stroke-width="1.2"/>
<rect x="1088" y="369" width="7.3" height="12.2" fill="none" stroke="#d8d8d0" stroke-width="1.2"/>
<rect x="1115.9" y="464.5" width="7.1" height="13.5" fill="none" stroke="#d8d8d0" stroke-width="1.2"/>
<rect x="1142.6" y="342" width="10.3" height="10.4" fill="none" stroke="#d8d8d0" stroke-width="1.2"/>
<circle cx="443.6" cy="320.6" r="11.3" fill="#dccc2c" />
<circle cx="443.6" cy="320.6" r="5.085000000000001" fill="none" stroke="#1a1a1a" stroke-width="1.2"/>
<path d="M438.51500000000004,320.6 L448.685,320.6 L443.6,325.12 Z" fill="none" stroke="#1a1a1a" stroke-width="1"/>
<circle cx="719" cy="320.6" r="11" fill="#9a4a12" />
<circle cx="719" cy="320.6" r="4.95" fill="none" stroke="#1a1a1a" stroke-width="1.2"/>
<path d="M714.05,320.6 L723.95,320.6 L719,325.0 Z" fill="none" stroke="#1a1a1a" stroke-width="1"/>
<circle cx="1145.7" cy="320.6" r="11.3" fill="#5c5a4a" />
<circle cx="1145.7" cy="320.6" r="5.085000000000001" fill="none" stroke="#1a1a1a" stroke-width="1.2"/>
<path d="M1140.615,320.6 L1150.785,320.6 L1145.7,325.12 Z" fill="none" stroke="#1a1a1a" stroke-width="1"/>
<circle cx="268" cy="572" r="17" fill="#e8a0a6" />
<circle cx="268" cy="572" r="7.65" fill="none" stroke="#1a1a1a" stroke-width="1.2"/>
<path d="M260.35,572 L275.65,572 L268,578.8 Z" fill="none" stroke="#1a1a1a" stroke-width="1"/>
<circle cx="1146" cy="708.3" r="11.5" fill="#e8959c" />
<circle cx="1146" cy="708.3" r="5.175" fill="none" stroke="#1a1a1a" stroke-width="1.2"/>
<path d="M1140.825,708.3 L1151.175,708.3 L1146,712.9 Z" fill="none" stroke="#1a1a1a" stroke-width="1"/>
<circle cx="808.5" cy="708.7" r="10.5" fill="#c882c2" />
<circle cx="808.5" cy="708.7" r="4.7250000000000005" fill="none" stroke="#1a1a1a" stroke-width="1.2"/>
<path d="M803.775,708.7 L813.225,708.7 L808.5,712.9000000000001 Z" fill="none" stroke="#1a1a1a" stroke-width="1"/>
<circle cx="352" cy="571" r="11.7" fill="#8a8c7e" />
<circle cx="352" cy="571" r="5.265" fill="none" stroke="#1a1a1a" stroke-width="1.2"/>
<path d="M346.735,571 L357.265,571 L352,575.68 Z" fill="none" stroke="#1a1a1a" stroke-width="1"/>
<circle cx="406" cy="708" r="11" fill="#90a2aa" />
<circle cx="406" cy="708" r="4.95" fill="none" stroke="#1a1a1a" stroke-width="1.2"/>
<path d="M401.05,708 L410.95,708 L406,712.4 Z" fill="none" stroke="#1a1a1a" stroke-width="1"/>
<rect x="159" y="698" width="22" height="21" fill="#c0903e" />
<circle cx="170" cy="708.3" r="9" fill="#c0903e" />
<circle cx="170" cy="708.3" r="4.05" fill="none" stroke="#1a1a1a" stroke-width="1.2"/>
<path d="M165.95,708.3 L174.05,708.3 L170,711.9 Z" fill="none" stroke="#1a1a1a" stroke-width="1"/>
<path d="M182,708.5 L224,708.5" fill="none" stroke="#c09040" stroke-width="7" stroke-linecap="round" stroke-linejoin="round" opacity="1"/>
<rect x="722.2" y="435.2" width="13.4" height="12.6" fill="#2e2e28" />
<rect x="722.2" y="435.2" width="13.4" height="12.6" fill="none" stroke="#d8d8d0" stroke-width="1.2"/>
<circle cx="728.9" cy="441.5" r="5.5" fill="#3a3a30" />
<circle cx="728.9" cy="441.5" r="2.475" fill="none" stroke="#1a1a1a" stroke-width="1.2"/>
<path d="M726.425,441.5 L731.375,441.5 L728.9,443.7 Z" fill="none" stroke="#1a1a1a" stroke-width="1"/>
<rect x="525" y="555.7" width="13.6" height="12.9" fill="#2a3a3c" />
<rect x="525" y="555.7" width="13.6" height="12.9" fill="none" stroke="#d8d8d0" stroke-width="1.2"/>
<circle cx="531.8" cy="562.2" r="6.2" fill="#d08a30" />
<circle cx="531.8" cy="562.2" r="2.79" fill="none" stroke="#1a1a1a" stroke-width="1.2"/>
<path d="M529.01,562.2 L534.5899999999999,562.2 L531.8,564.6800000000001 Z" fill="none" stroke="#1a1a1a" stroke-width="1"/>
<rect x="697.8" y="573.8" width="12.2" height="13.9" fill="#2a3a3c" />
<rect x="697.8" y="573.8" width="12.2" height="13.9" fill="none" stroke="#d8d8d0" stroke-width="1.2"/>
<circle cx="703.9" cy="580.7" r="6.2" fill="#d08a30" />
<circle cx="703.9" cy="580.7" r="2.79" fill="none" stroke="#1a1a1a" stroke-width="1.2"/>
<path d="M701.11,580.7 L706.6899999999999,580.7 L703.9,583.1800000000001 Z" fill="none" stroke="#1a1a1a" stroke-width="1"/>
<rect x="564.7" y="485.6" width="15.3" height="15.0" fill="#505050" />
<circle cx="572.4" cy="493.1" r="6.5" fill="#d8c0c8" />
<circle cx="572.4" cy="493.1" r="2.9250000000000003" fill="none" stroke="#1a1a1a" stroke-width="1.2"/>
<path d="M569.475,493.1 L575.3249999999999,493.1 L572.4,495.70000000000005 Z" fill="none" stroke="#1a1a1a" stroke-width="1"/>
<rect x="468" y="309" width="12" height="18" fill="#3b5a60" />
<rect x="502" y="309" width="9.8" height="18" fill="#7a4a48" />
<rect x="527" y="309" width="9" height="18" fill="#cc2028" />
<rect x="552.5" y="309" width="8.5" height="18" fill="#c89030" />
<rect x="593.5" y="309" width="11.5" height="18" fill="#c89a30" />
<rect x="629.6" y="309" width="12.9" height="18" fill="#a09068" />
<rect x="651.5" y="309" width="12.9" height="18" fill="#18a8b8" />
<rect x="670.8" y="309" width="12.9" height="18" fill="#a09068" />
<rect x="688.9" y="309" width="12.9" height="18" fill="#c89a38" />
<path d="M609,309 L624,309 L628,316 L628,323 L622,331 L610,331 L605,323 L605,316 Z" fill="#2d5054" stroke="none" stroke-width="0" />
<circle cx="474" cy="318" r="4.2" fill="#2e4f56" />
<circle cx="474" cy="318" r="3.2" fill="#2a2418" />
<path d="M472,318 H476" stroke="#777" stroke-width="0.6"/>
<circle cx="506.5" cy="318" r="4.2" fill="#6a3a38" />
<circle cx="506.5" cy="318" r="3.2" fill="#2a2418" />
<path d="M504.5,318 H508.5" stroke="#777" stroke-width="0.6"/>
<circle cx="531.5" cy="318" r="4.2" fill="#b81820" />
<circle cx="531.5" cy="318" r="3.2" fill="#2a2418" />
<path d="M529.5,318 H533.5" stroke="#777" stroke-width="0.6"/>
<circle cx="556.5" cy="318" r="4.2" fill="#a07020" />
<circle cx="556.5" cy="318" r="3.2" fill="#2a2418" />
<path d="M554.5,318 H558.5" stroke="#777" stroke-width="0.6"/>
<circle cx="599.3" cy="318" r="4.2" fill="#a07828" />
<circle cx="599.3" cy="318" r="3.2" fill="#2a2418" />
<path d="M597.3,318 H601.3" stroke="#777" stroke-width="0.6"/>
<circle cx="616.7" cy="318" r="4.2" fill="#6a5060" />
<circle cx="616.7" cy="318" r="3.2" fill="#2a2418" />
<path d="M614.7,318 H618.7" stroke="#777" stroke-width="0.6"/>
<circle cx="636" cy="318" r="4.2" fill="#7a7040" />
<circle cx="636" cy="318" r="3.2" fill="#2a2418" />
<path d="M634,318 H638" stroke="#777" stroke-width="0.6"/>
<circle cx="658" cy="318" r="4.2" fill="#107888" />
<circle cx="658" cy="318" r="3.2" fill="#2a2418" />
<path d="M656,318 H660" stroke="#777" stroke-width="0.6"/>
<circle cx="677.3" cy="318" r="4.2" fill="#706848" />
<circle cx="677.3" cy="318" r="3.2" fill="#2a2418" />
<path d="M675.3,318 H679.3" stroke="#777" stroke-width="0.6"/>
<circle cx="695.3" cy="318" r="4.2" fill="#a07828" />
<circle cx="695.3" cy="318" r="3.2" fill="#2a2418" />
<path d="M693.3,318 H697.3" stroke="#777" stroke-width="0.6"/>
<circle cx="397" cy="334" r="5.2" fill="#b01820" />
<circle cx="397" cy="334" r="2.5" fill="#141414" />
<circle cx="397" cy="408" r="5.2" fill="#6a4040" />
<circle cx="397" cy="408" r="2.5" fill="#141414" />
<circle cx="439.5" cy="408.4" r="5.2" fill="#6a4040" />
<circle cx="439.5" cy="408.4" r="2.5" fill="#141414" />
<circle cx="386" cy="428" r="5.2" fill="#b01820" />
<circle cx="386" cy="428" r="2.5" fill="#141414" />
<circle cx="386" cy="502" r="5.2" fill="#6a4040" />
<circle cx="386" cy="502" r="2.5" fill="#141414" />
<circle cx="452.5" cy="556.6" r="5.2" fill="#3a3a3a" />
<circle cx="452.5" cy="556.6" r="2.5" fill="#141414" />
<circle cx="499.4" cy="615.9" r="5.2" fill="#3a3a3a" />
<circle cx="499.4" cy="615.9" r="2.5" fill="#141414" />
<circle cx="395.4" cy="528.5" r="5.2" fill="#6a4040" />
<circle cx="395.4" cy="528.5" r="2.5" fill="#141414" />
<circle cx="428.1" cy="545.5" r="5.2" fill="#6a4040" />
<circle cx="428.1" cy="545.5" r="2.5" fill="#141414" />
<circle cx="500" cy="694" r="5.2" fill="#b01820" />
<circle cx="500" cy="694" r="2.5" fill="#141414" />
<circle cx="511.5" cy="409" r="5.2" fill="#c86030" />
<circle cx="511.5" cy="409" r="2.5" fill="#141414" />
<circle cx="534" cy="409" r="5.2" fill="#b01820" />
<circle cx="534" cy="409" r="2.5" fill="#141414" />
<circle cx="604" cy="409" r="5.2" fill="#e070c0" />
<circle cx="604" cy="409" r="2.5" fill="#141414" />
<circle cx="666" cy="400" r="5.2" fill="#b8a070" />
<circle cx="666" cy="400" r="2.5" fill="#141414" />
<circle cx="713" cy="400" r="5.2" fill="#e8402a" />
<circle cx="713" cy="400" r="2.5" fill="#141414" />
<circle cx="718" cy="344" r="5.2" fill="#3a5a60" />
<circle cx="718" cy="344" r="2.5" fill="#141414" />
<circle cx="209" cy="571" r="5.2" fill="#b8a070" />
<circle cx="209" cy="571" r="2.5" fill="#141414" />
<circle cx="231" cy="594" r="5.2" fill="#c07080" />
<circle cx="231" cy="594" r="2.5" fill="#141414" />
<circle cx="209" cy="619" r="5.2" fill="#a07860" />
<circle cx="209" cy="619" r="2.5" fill="#141414" />
<circle cx="307" cy="530" r="5.2" fill="#3aa0e0" />
<circle cx="307" cy="530" r="2.5" fill="#141414" />
<circle cx="290" cy="648.5" r="5.2" fill="#3aa0e0" />
<circle cx="290" cy="648.5" r="2.5" fill="#141414" />
<circle cx="313" cy="616" r="5.2" fill="#3aa0e0" />
<circle cx="313" cy="616" r="2.5" fill="#141414" />
<circle cx="274" cy="663" r="5.2" fill="#2a6a90" />
<circle cx="274" cy="663" r="2.5" fill="#141414" />
<circle cx="275" cy="530" r="5.2" fill="#d0b890" />
<circle cx="275" cy="530" r="2.5" fill="#141414" />
<circle cx="321.4" cy="529.4" r="5.2" fill="#3aa0e0" />
<circle cx="321.4" cy="529.4" r="2.5" fill="#141414" />
<circle cx="346" cy="529.4" r="5.2" fill="#9a9070" />
<circle cx="346" cy="529.4" r="2.5" fill="#141414" />
<circle cx="266" cy="640" r="5.2" fill="#b08060" />
<circle cx="266" cy="640" r="2.5" fill="#141414" />
<circle cx="273.5" cy="713.7" r="5.2" fill="#b08060" />
<circle cx="273.5" cy="713.7" r="2.5" fill="#141414" />
<circle cx="224.8" cy="706" r="5.2" fill="#c09040" />
<circle cx="224.8" cy="706" r="2.5" fill="#141414" />
<circle cx="248.8" cy="706" r="5.2" fill="#c09050" />
<circle cx="248.8" cy="706" r="2.5" fill="#141414" />
<circle cx="313" cy="694.6" r="5.2" fill="#c09050" />
<circle cx="313" cy="694.6" r="2.5" fill="#141414" />
<circle cx="379.4" cy="615.2" r="5.2" fill="#e0c8a8" />
<circle cx="379.4" cy="615.2" r="2.5" fill="#141414" />
<circle cx="379.4" cy="694.6" r="5.2" fill="#c09040" />
<circle cx="379.4" cy="694.6" r="2.5" fill="#141414" />
<circle cx="434" cy="615.2" r="5.2" fill="#e0c8a8" />
<circle cx="434" cy="615.2" r="2.5" fill="#141414" />
<circle cx="434" cy="694.6" r="5.2" fill="#c09040" />
<circle cx="434" cy="694.6" r="2.5" fill="#141414" />
<circle cx="453.5" cy="583.5" r="5.2" fill="#a09070" />
<circle cx="453.5" cy="583.5" r="2.5" fill="#141414" />
<circle cx="478" cy="583.5" r="5.2" fill="#2a2a2a" />
<circle cx="478" cy="583.5" r="2.5" fill="#141414" />
<circle cx="519" cy="716" r="5.2" fill="#c0c0c0" />
<circle cx="519" cy="716" r="2.5" fill="#141414" />
<circle cx="517" cy="690" r="5.2" fill="#2a2a2a" />
<circle cx="517" cy="690" r="2.5" fill="#141414" />
<circle cx="427.8" cy="490" r="5.2" fill="#c89040" />
<circle cx="427.8" cy="490" r="2.5" fill="#141414" />
<circle cx="452.5" cy="490" r="5.2" fill="#d0d0d0" />
<circle cx="452.5" cy="490" r="2.5" fill="#141414" />
<circle cx="513" cy="494" r="5.2" fill="#c88030" />
<circle cx="513" cy="494" r="2.5" fill="#141414" />
<circle cx="540" cy="497" r="5.2" fill="#c86040" />
<circle cx="540" cy="497" r="2.5" fill="#141414" />
<circle cx="537" cy="518" r="5.2" fill="#a0c8e0" />
<circle cx="537" cy="518" r="2.5" fill="#141414" />
<circle cx="513" cy="518" r="5.2" fill="#c88030" />
<circle cx="513" cy="518" r="2.5" fill="#141414" />
<circle cx="591" cy="494" r="5.2" fill="#c88030" />
<circle cx="591" cy="494" r="2.5" fill="#141414" />
<circle cx="613" cy="495.4" r="5.2" fill="#e070c0" />
<circle cx="613" cy="495.4" r="2.5" fill="#141414" />
<circle cx="613" cy="512.5" r="5.2" fill="#e070c0" />
<circle cx="613" cy="512.5" r="2.5" fill="#141414" />
<circle cx="591" cy="518" r="5.2" fill="#c88030" />
<circle cx="591" cy="518" r="2.5" fill="#141414" />
<circle cx="514" cy="543" r="5.2" fill="#c88a3a" />
<circle cx="514" cy="543" r="2.5" fill="#141414" />
<circle cx="531" cy="543" r="5.2" fill="#a0d0f0" />
<circle cx="531" cy="543" r="2.5" fill="#141414" />
<circle cx="549" cy="543" r="5.2" fill="#0a6050" />
<circle cx="549" cy="543" r="2.5" fill="#141414" />
<circle cx="574" cy="543" r="5.2" fill="#c05030" />
<circle cx="574" cy="543" r="2.5" fill="#141414" />
<circle cx="591" cy="543" r="5.2" fill="#3a5a60" />
<circle cx="591" cy="543" r="2.5" fill="#141414" />
<circle cx="617" cy="543" r="5.2" fill="#c88a3a" />
<circle cx="617" cy="543" r="2.5" fill="#141414" />
<circle cx="635" cy="543" r="5.2" fill="#e050a0" />
<circle cx="635" cy="543" r="2.5" fill="#141414" />
<circle cx="653" cy="543" r="5.2" fill="#e0b020" />
<circle cx="653" cy="543" r="2.5" fill="#141414" />
<circle cx="678" cy="543" r="5.2" fill="#e070c0" />
<circle cx="678" cy="543" r="2.5" fill="#141414" />
<circle cx="695" cy="543" r="5.2" fill="#3a5a60" />
<circle cx="695" cy="543" r="2.5" fill="#141414" />
<circle cx="571.8" cy="651" r="5.2" fill="#d08a30" />
<circle cx="571.8" cy="651" r="2.5" fill="#141414" />
<circle cx="604.5" cy="651" r="5.2" fill="#3a5a60" />
<circle cx="604.5" cy="651" r="2.5" fill="#141414" />
<circle cx="697.9" cy="651" r="5.2" fill="#d08a30" />
<circle cx="697.9" cy="651" r="2.5" fill="#141414" />
<circle cx="730.3" cy="651" r="5.2" fill="#3a5a60" />
<circle cx="730.3" cy="651" r="2.5" fill="#141414" />
<circle cx="616" cy="458" r="5.2" fill="#b09080" />
<circle cx="616" cy="458" r="2.5" fill="#141414" />
<circle cx="633.8" cy="458" r="5.2" fill="#605060" />
<circle cx="633.8" cy="458" r="2.5" fill="#141414" />
<circle cx="651.7" cy="458" r="5.2" fill="#c09070" />
<circle cx="651.7" cy="458" r="2.5" fill="#141414" />
<circle cx="672.9" cy="458" r="5.2" fill="#a07828" />
<circle cx="672.9" cy="458" r="2.5" fill="#141414" />
<circle cx="691.8" cy="458" r="5.2" fill="#a09090" />
<circle cx="691.8" cy="458" r="2.5" fill="#141414" />
<circle cx="710" cy="458" r="5.2" fill="#403040" />
<circle cx="710" cy="458" r="2.5" fill="#141414" />
<circle cx="800" cy="608.75" r="5.2" fill="#605058" />
<circle cx="800" cy="608.75" r="2.5" fill="#141414" />
<circle cx="816.25" cy="608.75" r="5.2" fill="#e03020" />
<circle cx="816.25" cy="608.75" r="2.5" fill="#141414" />
<circle cx="858.25" cy="608.75" r="5.2" fill="#d8d020" />
<circle cx="858.25" cy="608.75" r="2.5" fill="#141414" />
<circle cx="858.25" cy="629.5" r="5.2" fill="#e03020" />
<circle cx="858.25" cy="629.5" r="2.5" fill="#141414" />
<circle cx="800" cy="650.5" r="5.2" fill="#2a3a40" />
<circle cx="800" cy="650.5" r="2.5" fill="#141414" />
<circle cx="816.25" cy="650.5" r="5.2" fill="#e03020" />
<circle cx="816.25" cy="650.5" r="2.5" fill="#141414" />
<circle cx="858.25" cy="650.5" r="5.2" fill="#c0a0b0" />
<circle cx="858.25" cy="650.5" r="2.5" fill="#141414" />
<circle cx="557.5" cy="716" r="5.2" fill="#c09040" />
<circle cx="557.5" cy="716" r="2.5" fill="#141414" />
<circle cx="733" cy="716" r="5.2" fill="#c09040" />
<circle cx="733" cy="716" r="2.5" fill="#141414" />
<circle cx="836" cy="715" r="5.2" fill="#30a0e0" />
<circle cx="836" cy="715" r="2.5" fill="#141414" />
<circle cx="852.5" cy="715" r="5.2" fill="#c09040" />
<circle cx="852.5" cy="715" r="2.5" fill="#141414" />
<circle cx="783" cy="714.4" r="5.2" fill="#c070c0" />
<circle cx="783" cy="714.4" r="2.5" fill="#141414" />
<circle cx="783" cy="689.6" r="5.2" fill="#c08030" />
<circle cx="783" cy="689.6" r="2.5" fill="#141414" />
<circle cx="943.6" cy="332" r="5.2" fill="#9090b0" />
<circle cx="943.6" cy="332" r="2.5" fill="#141414" />
<circle cx="968" cy="316" r="5.2" fill="#9090b0" />
<circle cx="968" cy="316" r="2.5" fill="#141414" />
<circle cx="968" cy="342" r="5.2" fill="#9090b0" />
<circle cx="968" cy="342" r="2.5" fill="#141414" />
<circle cx="997" cy="316" r="5.2" fill="#8a3010" />
<circle cx="997" cy="316" r="2.5" fill="#141414" />
<circle cx="997" cy="342" r="5.2" fill="#8a3010" />
<circle cx="997" cy="342" r="2.5" fill="#141414" />
<circle cx="963" cy="499" r="5.2" fill="#a060a0" />
<circle cx="963" cy="499" r="2.5" fill="#141414" />
<circle cx="983" cy="488" r="5.2" fill="#a060a0" />
<circle cx="983" cy="488" r="2.5" fill="#141414" />
<circle cx="983" cy="512" r="5.2" fill="#a060a0" />
<circle cx="983" cy="512" r="2.5" fill="#141414" />
<circle cx="1010" cy="488" r="5.2" fill="#6a2008" />
<circle cx="1010" cy="488" r="2.5" fill="#141414" />
<circle cx="1010" cy="512" r="5.2" fill="#6a2008" />
<circle cx="1010" cy="512" r="2.5" fill="#141414" />
<circle cx="1147.7" cy="347" r="5.2" fill="#a09040" />
<circle cx="1147.7" cy="347" r="2.5" fill="#141414" />
<circle cx="406.2" cy="611.2" r="3.8" fill="#8a7a5a" />
<circle cx="406.2" cy="611.2" r="1.8" fill="#141414" />
<circle cx="406.2" cy="652.9" r="3.8" fill="#8a7a5a" />
<circle cx="406.2" cy="652.9" r="1.8" fill="#141414" />
<circle cx="406.2" cy="662.8" r="3.8" fill="#c0a060" />
<circle cx="406.2" cy="662.8" r="1.8" fill="#141414" />
<circle cx="406.2" cy="687.8" r="3.8" fill="#a0a8b0" />
<circle cx="406.2" cy="687.8" r="1.8" fill="#141414" />
<circle cx="396" cy="578.8" r="3.8" fill="#b0a080" />
<circle cx="396" cy="578.8" r="1.8" fill="#141414" />
<circle cx="396" cy="603.5" r="3.8" fill="#d0b890" />
<circle cx="396" cy="603.5" r="1.8" fill="#141414" />
<circle cx="346" cy="529.4" r="3.8" fill="#9a9070" />
<circle cx="346" cy="529.4" r="1.8" fill="#141414" />
<circle cx="321.4" cy="529.4" r="3.8" fill="#3aa0e0" />
<circle cx="321.4" cy="529.4" r="1.8" fill="#141414" />
<circle cx="749.4" cy="409.7" r="7" fill="#e8402a" />
<circle cx="749.4" cy="409.7" r="3.4" fill="#141414" />
<circle cx="749.4" cy="535.8" r="7" fill="#e8402a" />
<circle cx="749.4" cy="535.8" r="3.4" fill="#141414" />
<circle cx="749.4" cy="360.9" r="7" fill="#b89a88" />
<circle cx="749.4" cy="360.9" r="3.4" fill="#141414" />
<circle cx="749.4" cy="486" r="7" fill="#b89a88" />
<circle cx="749.4" cy="486" r="3.4" fill="#141414" />
<path d="M362,308 L1153,308 Q1159,308 1159,314 L1159,715 Q1159,721 1153,721 L150,721 Q144,721 144,715 L144,479 Q144,473 150,473 L350,473 Q356,473 356,467 L356,314 Q356,308 362,308 Z" fill="none" stroke="#bfc4c4" stroke-width="1.4" />
<rect x="542" y="333" width="14" height="8" fill="#a08860" />
<rect x="542" y="333" width="4.2" height="8" fill="#c02020" />
<rect x="542" y="333" width="14" height="8" fill="none" stroke="#e0dcd0" stroke-width="1.0"/>
<rect x="542" y="343" width="14" height="8" fill="#a08860" />
<rect x="542" y="343" width="4.2" height="8" fill="#806060" />
<rect x="542" y="343" width="14" height="8" fill="none" stroke="#e0dcd0" stroke-width="1.0"/>
<rect x="573.6" y="320.7" width="12.2" height="6.9" fill="#d0a030" />
<rect x="573.6" y="320.7" width="12.2" height="6.9" fill="none" stroke="#e0dcd0" stroke-width="1.0"/>
<rect x="565.7" y="343" width="12.2" height="7.2" fill="#a09088" />
<rect x="565.7" y="343" width="12.2" height="7.2" fill="none" stroke="#e0dcd0" stroke-width="1.0"/>
<rect x="585.4" y="343" width="13.6" height="7.2" fill="#3a90b8" />
<rect x="585.4" y="343" width="13.6" height="7.2" fill="none" stroke="#e0dcd0" stroke-width="1.0"/>
<rect x="613.5" y="333" width="6.5" height="3" fill="#b09060" />
<rect x="613.5" y="333" width="6.5" height="3" fill="none" stroke="#e0dcd0" stroke-width="1.0"/>
<rect x="612.6" y="338" width="12.2" height="6" fill="#a09060" />
<rect x="612.6" y="338" width="3.66" height="6" fill="#d0a040" />
<rect x="621.14" y="338" width="3.66" height="6" fill="#c06040" />
<rect x="612.6" y="338" width="12.2" height="6" fill="none" stroke="#e0dcd0" stroke-width="1.0"/>
<rect x="627" y="338.7" width="11" height="5.3" fill="#a08868" />
<rect x="627" y="338.7" width="3.3" height="5.3" fill="#c06040" />
<rect x="634.7" y="338.7" width="3.3" height="5.3" fill="#a050a0" />
<rect x="627" y="338.7" width="11" height="5.3" fill="none" stroke="#e0dcd0" stroke-width="1.0"/>
<rect x="612.6" y="345.8" width="12.2" height="6.2" fill="#a09060" />
<rect x="612.6" y="345.8" width="3.66" height="6.2" fill="#d0a040" />
<rect x="621.14" y="345.8" width="3.66" height="6.2" fill="#c050c0" />
<rect x="612.6" y="345.8" width="12.2" height="6.2" fill="none" stroke="#e0dcd0" stroke-width="1.0"/>
<rect x="628.5" y="346.5" width="11.0" height="5.5" fill="#c060c0" />
<rect x="636.2" y="346.5" width="3.3" height="5.5" fill="#a050a0" />
<rect x="628.5" y="346.5" width="11.0" height="5.5" fill="none" stroke="#e0dcd0" stroke-width="1.0"/>
<rect x="641.7" y="338.7" width="10.7" height="13.3" fill="#8a7860" />
<rect x="641.7" y="338.7" width="10.7" height="3.99" fill="#d03020" />
<rect x="641.7" y="338.7" width="10.7" height="13.3" fill="none" stroke="#e0dcd0" stroke-width="1.0"/>
<rect x="625.4" y="358.4" width="23.9" height="30.2" fill="#8a7850" />
<rect x="625.4" y="358.4" width="23.9" height="30.2" fill="none" stroke="#e0dcd0" stroke-width="1.0"/>
<rect x="611" y="359.6" width="7.5" height="3.9" fill="#b09060" />
<rect x="611" y="359.6" width="7.5" height="3.9" fill="none" stroke="#e0dcd0" stroke-width="1.0"/>
<rect x="611" y="365" width="7.5" height="4" fill="#b09060" />
<rect x="611" y="365" width="7.5" height="4" fill="none" stroke="#e0dcd0" stroke-width="1.0"/>
<rect x="611" y="370.5" width="7.5" height="4.0" fill="#b09060" />
<rect x="611" y="370.5" width="7.5" height="4.0" fill="none" stroke="#e0dcd0" stroke-width="1.0"/>
<rect x="611" y="376" width="7.5" height="4" fill="#d0b8c8" />
<rect x="611" y="376" width="7.5" height="4" fill="none" stroke="#e0dcd0" stroke-width="1.0"/>
<rect x="618.5" y="393" width="11.9" height="7" fill="#a89060" />
<rect x="618.5" y="393" width="3.57" height="7" fill="#d0a040" />
<rect x="626.8299999999999" y="393" width="3.57" height="7" fill="#d0a040" />
<rect x="618.5" y="393" width="11.9" height="7" fill="none" stroke="#e0dcd0" stroke-width="1.0"/>
<rect x="618.5" y="401" width="11.9" height="6.4" fill="#a89060" />
<rect x="618.5" y="401" width="3.57" height="6.4" fill="#d0a040" />
<rect x="626.8299999999999" y="401" width="3.57" height="6.4" fill="#d0a040" />
<rect x="618.5" y="401" width="11.9" height="6.4" fill="none" stroke="#e0dcd0" stroke-width="1.0"/>
<rect x="633" y="391.7" width="12.5" height="9.3" fill="#a89060" />
<rect x="633" y="391.7" width="3.75" height="9.3" fill="#d0a040" />
<rect x="641.75" y="391.7" width="3.75" height="9.3" fill="#e01030" />
<rect x="633" y="391.7" width="12.5" height="9.3" fill="none" stroke="#e0dcd0" stroke-width="1.0"/>
<rect x="593" y="378" width="6" height="6" fill="#c0a070" />
<rect x="593" y="378" width="6" height="6" fill="none" stroke="#e0dcd0" stroke-width="1.0"/>
<rect x="605" y="430" width="12" height="6" fill="#c09890" />
<rect x="605" y="430" width="12" height="6" fill="none" stroke="#e0dcd0" stroke-width="1.0"/>
<rect x="620" y="430" width="12" height="6" fill="#705060" />
<rect x="620" y="430" width="12" height="6" fill="none" stroke="#e0dcd0" stroke-width="1.0"/>
<rect x="596" y="433" width="10" height="4" fill="#b09060" />
<rect x="596" y="433" width="10" height="4" fill="none" stroke="#e0dcd0" stroke-width="1.0"/>
<rect x="640" y="473.5" width="6.4" height="11.5" fill="#a09080" />
<rect x="640" y="473.5" width="6.4" height="3.45" fill="#c0a0a0" />
<rect x="640" y="481.55" width="6.4" height="3.45" fill="#a0a8a0" />
<rect x="640" y="473.5" width="6.4" height="11.5" fill="none" stroke="#e0dcd0" stroke-width="1.0"/>
<rect x="649" y="471.3" width="12" height="6.3" fill="#a08878" />
<rect x="649" y="471.3" width="3.6" height="6.3" fill="#c09090" />
<rect x="657.4" y="471.3" width="3.6" height="6.3" fill="#c0a060" />
<rect x="649" y="471.3" width="12" height="6.3" fill="none" stroke="#e0dcd0" stroke-width="1.0"/>
<rect x="649" y="479.5" width="11.2" height="5.0" fill="#60a0a8" />
<rect x="649" y="479.5" width="3.36" height="5.0" fill="#a0a8a0" />
<rect x="649" y="479.5" width="11.2" height="5.0" fill="none" stroke="#e0dcd0" stroke-width="1.0"/>
<rect x="634.8" y="476" width="3.0" height="6.6" fill="#c0b0a0" />
<rect x="634.8" y="476" width="3.0" height="6.6" fill="none" stroke="#e0dcd0" stroke-width="1.0"/>
<rect x="627.8" y="484.5" width="10.4" height="11.9" fill="#4a6a70" />
<rect x="627.8" y="484.5" width="10.4" height="3.57" fill="#d04020" />
<rect x="627.8" y="484.5" width="10.4" height="11.9" fill="none" stroke="#e0dcd0" stroke-width="1.0"/>
<rect x="666.8" y="478.2" width="5.4" height="11.3" fill="#c09040" />
<rect x="666.8" y="486.11" width="5.4" height="3.39" fill="#50a0b0" />
<rect x="666.8" y="478.2" width="5.4" height="11.3" fill="none" stroke="#e0dcd0" stroke-width="1.0"/>
<rect x="678.8" y="476.3" width="10.6" height="12.0" fill="#a88858" />
<rect x="678.8" y="476.3" width="10.6" height="3.6" fill="#e02020" />
<rect x="678.8" y="476.3" width="10.6" height="12.0" fill="none" stroke="#e0dcd0" stroke-width="1.0"/>
<rect x="691.4" y="485" width="11.6" height="5.8" fill="#c08040" />
<rect x="699.52" y="485" width="3.48" height="5.8" fill="#e0c040" />
<rect x="691.4" y="485" width="11.6" height="5.8" fill="none" stroke="#e0dcd0" stroke-width="1.0"/>
<rect x="705.2" y="484.5" width="12.2" height="6.3" fill="#c0a050" />
<rect x="705.2" y="484.5" width="3.66" height="6.3" fill="#e0c040" />
<rect x="713.74" y="484.5" width="3.66" height="6.3" fill="#605060" />
<rect x="705.2" y="484.5" width="12.2" height="6.3" fill="none" stroke="#e0dcd0" stroke-width="1.0"/>
<rect x="709" y="476.3" width="6.5" height="3.2" fill="#c0b0a0" />
<rect x="709" y="476.3" width="6.5" height="3.2" fill="none" stroke="#e0dcd0" stroke-width="1.0"/>
<rect x="691.4" y="492.7" width="11.6" height="5.3" fill="#60b0c0" />
<rect x="691.4" y="492.7" width="3.48" height="5.3" fill="#d08040" />
<rect x="691.4" y="492.7" width="11.6" height="5.3" fill="none" stroke="#e0dcd0" stroke-width="1.0"/>
<rect x="705.2" y="492.4" width="12.2" height="5.9" fill="#80b0b8" />
<rect x="713.74" y="492.4" width="3.66" height="5.9" fill="#605060" />
<rect x="705.2" y="492.4" width="12.2" height="5.9" fill="none" stroke="#e0dcd0" stroke-width="1.0"/>
<rect x="659.8" y="492.4" width="29.8" height="23.0" fill="#8d7a48" />
<rect x="659.8" y="492.4" width="29.8" height="23.0" fill="none" stroke="#e0dcd0" stroke-width="1.0"/>
<rect x="692.3" y="499.6" width="11.7" height="8.8" fill="#a05030" />
<rect x="692.3" y="499.6" width="3.51" height="8.8" fill="#a03010" />
<rect x="700.49" y="499.6" width="3.51" height="8.8" fill="#e01040" />
<rect x="692.3" y="499.6" width="11.7" height="8.8" fill="none" stroke="#e0dcd0" stroke-width="1.0"/>
<rect x="696" y="511" width="6.3" height="11.2" fill="#c09050" />
<rect x="696" y="511" width="6.3" height="3.36" fill="#e01040" />
<rect x="696" y="511" width="6.3" height="11.2" fill="none" stroke="#e0dcd0" stroke-width="1.0"/>
<rect x="703" y="511" width="6.5" height="11.2" fill="#c09050" />
<rect x="703" y="511" width="6.5" height="3.36" fill="#e01040" />
<rect x="703" y="511" width="6.5" height="11.2" fill="none" stroke="#e0dcd0" stroke-width="1.0"/>
<rect x="710.8" y="511.5" width="3.5" height="6.9" fill="#c0c0c0" />
<rect x="710.8" y="511.5" width="3.5" height="2.07" fill="#e01040" />
<rect x="710.8" y="511.5" width="3.5" height="6.9" fill="none" stroke="#e0dcd0" stroke-width="1.0"/>
<rect x="627" y="504.6" width="12.5" height="6.9" fill="#60c0d8" />
<rect x="627" y="504.6" width="12.5" height="6.9" fill="none" stroke="#e0dcd0" stroke-width="1.0"/>
<rect x="640.7" y="516.3" width="12.6" height="7.2" fill="#a09a40" />
<rect x="640.7" y="516.3" width="12.6" height="7.2" fill="none" stroke="#e0dcd0" stroke-width="1.0"/>
<rect x="654.6" y="510.3" width="3.7" height="6.9" fill="#c0a070" />
<rect x="654.6" y="510.3" width="3.7" height="6.9" fill="none" stroke="#e0dcd0" stroke-width="1.0"/>
<rect x="657.7" y="519" width="3.2" height="7.6" fill="#a09060" />
<rect x="657.7" y="519" width="3.2" height="7.6" fill="none" stroke="#e0dcd0" stroke-width="1.0"/>
<rect x="662.7" y="519" width="3.8" height="7.6" fill="#60b0d0" />
<rect x="662.7" y="519" width="3.8" height="7.6" fill="none" stroke="#e0dcd0" stroke-width="1.0"/>
<rect x="573" y="492" width="6" height="7" fill="#c09890" />
<rect x="573" y="492" width="6" height="7" fill="none" stroke="#e0dcd0" stroke-width="1.0"/>
<rect x="546" y="562.4" width="6.6" height="12.9" fill="#0a8060" />
<rect x="546" y="571.43" width="6.6" height="3.87" fill="#806a30" />
<rect x="546" y="562.4" width="6.6" height="12.9" fill="none" stroke="#e0dcd0" stroke-width="1.0"/>
<rect x="554" y="562.4" width="12.2" height="6.1" fill="#a09060" />
<rect x="562.5400000000001" y="562.4" width="3.66" height="6.1" fill="#e890a8" />
<rect x="554" y="562.4" width="12.2" height="6.1" fill="none" stroke="#e0dcd0" stroke-width="1.0"/>
<rect x="554" y="570" width="12.2" height="6" fill="#807050" />
<rect x="562.5400000000001" y="570" width="3.66" height="6" fill="#807050" />
<rect x="554" y="570" width="12.2" height="6" fill="none" stroke="#e0dcd0" stroke-width="1.0"/>
<rect x="568.2" y="563.2" width="11.8" height="4.5" fill="#8ab0e0" />
<rect x="568.2" y="563.2" width="3.54" height="4.5" fill="#e890a8" />
<rect x="568.2" y="563.2" width="11.8" height="4.5" fill="none" stroke="#e0dcd0" stroke-width="1.0"/>
<rect x="569.7" y="570.5" width="11.7" height="4.8" fill="#606060" />
<rect x="577.89" y="570.5" width="3.51" height="4.8" fill="#8ab0e0" />
<rect x="569.7" y="570.5" width="11.7" height="4.8" fill="none" stroke="#e0dcd0" stroke-width="1.0"/>
<rect x="556.4" y="557.4" width="7.6" height="2.8" fill="#b09060" />
<rect x="556.4" y="557.4" width="7.6" height="2.8" fill="none" stroke="#e0dcd0" stroke-width="1.0"/>
<rect x="530.6" y="579" width="3.4" height="7" fill="#c0a070" />
<rect x="530.6" y="579" width="3.4" height="7" fill="none" stroke="#e0dcd0" stroke-width="1.0"/>
<rect x="582" y="580.6" width="13.8" height="5.4" fill="#a06040" />
<rect x="582" y="580.6" width="13.8" height="5.4" fill="none" stroke="#e0dcd0" stroke-width="1.0"/>
<rect x="598" y="567.4" width="6" height="13.2" fill="#e0b030" />
<rect x="598" y="567.4" width="6" height="3.96" fill="#60a0e0" />
<rect x="598" y="567.4" width="6" height="13.2" fill="none" stroke="#e0dcd0" stroke-width="1.0"/>
<rect x="589" y="567" width="5.2" height="8.3" fill="#b09070" />
<rect x="589" y="567" width="5.2" height="2.49" fill="#c05040" />
<rect x="589" y="567" width="5.2" height="8.3" fill="none" stroke="#e0dcd0" stroke-width="1.0"/>
<rect x="583.6" y="576" width="12.9" height="3" fill="#b07050" />
<rect x="583.6" y="576" width="12.9" height="3" fill="none" stroke="#e0dcd0" stroke-width="1.0"/>
<rect x="598" y="582" width="6.8" height="4" fill="#c0b090" />
<rect x="598" y="582" width="6.8" height="4" fill="none" stroke="#e0dcd0" stroke-width="1.0"/>
<rect x="607" y="561.7" width="18.3" height="24.3" fill="#8a7850" />
<rect x="607" y="561.7" width="18.3" height="24.3" fill="none" stroke="#e0dcd0" stroke-width="1.0"/>
<rect x="627.6" y="573" width="12.9" height="6" fill="#b09870" />
<rect x="627.6" y="573" width="3.87" height="6" fill="#c090c8" />
<rect x="636.63" y="573" width="3.87" height="6" fill="#d0b040" />
<rect x="627.6" y="573" width="12.9" height="6" fill="none" stroke="#e0dcd0" stroke-width="1.0"/>
<rect x="627.6" y="580.6" width="12.9" height="6.1" fill="#b09870" />
<rect x="627.6" y="580.6" width="3.87" height="6.1" fill="#c090c8" />
<rect x="636.63" y="580.6" width="3.87" height="6.1" fill="#d0b040" />
<rect x="627.6" y="580.6" width="12.9" height="6.1" fill="none" stroke="#e0dcd0" stroke-width="1.0"/>
<rect x="643.5" y="563.2" width="12.1" height="5.3" fill="#3a7078" />
<rect x="643.5" y="563.2" width="12.1" height="5.3" fill="none" stroke="#e0dcd0" stroke-width="1.0"/>
<rect x="658.6" y="562.4" width="12.2" height="6.8" fill="#3a7078" />
<rect x="658.6" y="562.4" width="12.2" height="6.8" fill="none" stroke="#e0dcd0" stroke-width="1.0"/>
<rect x="645.8" y="571" width="11.3" height="4.3" fill="#807060" />
<rect x="653.71" y="571" width="3.39" height="4.3" fill="#f09090" />
<rect x="645.8" y="571" width="11.3" height="4.3" fill="none" stroke="#e0dcd0" stroke-width="1.0"/>
<rect x="658.6" y="570" width="12.2" height="6.8" fill="#a09070" />
<rect x="658.6" y="570" width="3.66" height="6.8" fill="#f09090" />
<rect x="658.6" y="570" width="12.2" height="6.8" fill="none" stroke="#e0dcd0" stroke-width="1.0"/>
<rect x="644.2" y="577" width="13.8" height="5" fill="#707060" />
<rect x="644.2" y="577" width="13.8" height="5" fill="none" stroke="#e0dcd0" stroke-width="1.0"/>
<rect x="660" y="577.6" width="7.7" height="3.8" fill="#b09060" />
<rect x="660" y="577.6" width="7.7" height="3.8" fill="none" stroke="#e0dcd0" stroke-width="1.0"/>
<rect x="672.3" y="561.7" width="6.7" height="14.3" fill="#e0e0d8" />
<rect x="672.3" y="561.7" width="6.7" height="4.29" fill="#e0b030" />
<rect x="672.3" y="561.7" width="6.7" height="14.3" fill="none" stroke="#e0dcd0" stroke-width="1.0"/>
<rect x="643.5" y="584.4" width="12.1" height="13.6" fill="#c0a0b0" />
<rect x="643.5" y="584.4" width="12.1" height="4.08" fill="#e060b0" />
<rect x="643.5" y="584.4" width="12.1" height="13.6" fill="none" stroke="#e0dcd0" stroke-width="1.0"/>
<rect x="659.4" y="590.5" width="13.6" height="6.8" fill="#e8b830" />
<rect x="659.4" y="590.5" width="13.6" height="6.8" fill="none" stroke="#e0dcd0" stroke-width="1.0"/>
<rect x="638" y="590.5" width="3.2" height="6.8" fill="#c0b0a0" />
<rect x="638" y="590.5" width="3.2" height="6.8" fill="none" stroke="#e0dcd0" stroke-width="1.0"/>
<rect x="686" y="586" width="3.7" height="7.5" fill="#c0a070" />
<rect x="686" y="586" width="3.7" height="7.5" fill="none" stroke="#e0dcd0" stroke-width="1.0"/>
<rect x="613.6" y="713" width="12.2" height="7.6" fill="#c89090" />
<rect x="613.6" y="713" width="12.2" height="7.6" fill="none" stroke="#e0dcd0" stroke-width="1.0"/>
<rect x="637.3" y="713" width="12.7" height="7.6" fill="#604858" />
<rect x="637.3" y="713" width="12.7" height="7.6" fill="none" stroke="#e0dcd0" stroke-width="1.0"/>
<rect x="659" y="713" width="13.7" height="7.6" fill="#d04050" />
<rect x="659" y="713" width="13.7" height="7.6" fill="none" stroke="#e0dcd0" stroke-width="1.0"/>
<rect x="681.2" y="713" width="12.8" height="7.6" fill="#c8c4c0" />
<rect x="681.2" y="713" width="12.8" height="7.6" fill="none" stroke="#e0dcd0" stroke-width="1.0"/>
<rect x="586" y="714" width="9.5" height="4" fill="#d0d0d0" />
<rect x="586" y="714" width="9.5" height="4" fill="none" stroke="#e0dcd0" stroke-width="1.0"/>
<rect x="866.5" y="387.4" width="12.3" height="7.2" fill="#8a3010" />
<rect x="866.5" y="387.4" width="12.3" height="7.2" fill="none" stroke="#e0dcd0" stroke-width="1.0"/>
<rect x="907.6" y="393.6" width="22.6" height="16.4" fill="#b09070" />
<rect x="907.6" y="393.6" width="6.78" height="16.4" fill="#e02020" />
<rect x="923.4200000000001" y="393.6" width="6.78" height="16.4" fill="#e05030" />
<rect x="907.6" y="393.6" width="22.6" height="16.4" fill="none" stroke="#e0dcd0" stroke-width="1.0"/>
<rect x="919" y="413" width="7.1" height="12.5" fill="#e01848" />
<rect x="919" y="413" width="7.1" height="12.5" fill="none" stroke="#e0dcd0" stroke-width="1.0"/>
<rect x="894.3" y="401.8" width="12.3" height="7.2" fill="#c0c0a0" />
<rect x="902.91" y="401.8" width="3.69" height="7.2" fill="#60a0c0" />
<rect x="894.3" y="401.8" width="12.3" height="7.2" fill="none" stroke="#e0dcd0" stroke-width="1.0"/>
<rect x="894.3" y="412" width="12.3" height="6" fill="#c0c0a0" />
<rect x="902.91" y="412" width="3.69" height="6" fill="#60a0c0" />
<rect x="894.3" y="412" width="12.3" height="6" fill="none" stroke="#e0dcd0" stroke-width="1.0"/>
<rect x="934.4" y="339" width="8.2" height="12.4" fill="#a07040" />
<rect x="934.4" y="339" width="8.2" height="12.4" fill="none" stroke="#e0dcd0" stroke-width="1.0"/>
<rect x="936.5" y="490.4" width="12.3" height="7.2" fill="#f0a890" />
<rect x="936.5" y="490.4" width="12.3" height="7.2" fill="none" stroke="#e0dcd0" stroke-width="1.0"/>
<rect x="936.5" y="508.3" width="12.3" height="7.2" fill="#707860" />
<rect x="936.5" y="508.3" width="12.3" height="7.2" fill="none" stroke="#e0dcd0" stroke-width="1.0"/>
<rect x="898.2" y="519.4" width="16.9" height="22.4" fill="#a89878" />
<rect x="898.2" y="519.4" width="16.9" height="6.72" fill="#e03030" />
<rect x="898.2" y="535.0799999999999" width="16.9" height="6.72" fill="#e0a0a0" />
<rect x="898.2" y="519.4" width="16.9" height="22.4" fill="none" stroke="#e0dcd0" stroke-width="1.0"/>
<rect x="903.5" y="544.7" width="11.6" height="7.8" fill="#d8d0a0" />
<rect x="903.5" y="544.7" width="11.6" height="7.8" fill="none" stroke="#e0dcd0" stroke-width="1.0"/>
<rect x="903.5" y="553.5" width="11.6" height="7.7" fill="#d8d0a0" />
<rect x="903.5" y="553.5" width="11.6" height="7.7" fill="none" stroke="#e0dcd0" stroke-width="1.0"/>
<rect x="898.2" y="571" width="11.1" height="5.8" fill="#a03010" />
<rect x="898.2" y="571" width="11.1" height="5.8" fill="none" stroke="#e0dcd0" stroke-width="1.0"/>
<rect x="898.2" y="585.5" width="11.1" height="6.8" fill="#e01848" />
<rect x="898.2" y="585.5" width="11.1" height="6.8" fill="none" stroke="#e0dcd0" stroke-width="1.0"/>
<rect x="876.2" y="614.7" width="12.7" height="6.8" fill="#a098b0" />
<rect x="876.2" y="614.7" width="12.7" height="6.8" fill="none" stroke="#e0dcd0" stroke-width="1.0"/>
<rect x="876" y="443.7" width="12.5" height="6.3" fill="#d0c8b8" />
<rect x="876" y="443.7" width="12.5" height="6.3" fill="none" stroke="#e0dcd0" stroke-width="1.0"/>
<rect x="950.6" y="712.9" width="13.0" height="7.5" fill="#a8d8e8" />
<rect x="950.6" y="712.9" width="13.0" height="7.5" fill="none" stroke="#e0dcd0" stroke-width="1.0"/>
<rect x="972.4" y="712.9" width="13.0" height="7.5" fill="#585858" />
<rect x="972.4" y="712.9" width="13.0" height="7.5" fill="none" stroke="#e0dcd0" stroke-width="1.0"/>
<rect x="994.5" y="712.9" width="12.7" height="7.5" fill="#c86030" />
<rect x="994.5" y="712.9" width="12.7" height="7.5" fill="none" stroke="#e0dcd0" stroke-width="1.0"/>
<rect x="1016.6" y="712.9" width="12.7" height="7.5" fill="#c08078" />
<rect x="1016.6" y="712.9" width="12.7" height="7.5" fill="none" stroke="#e0dcd0" stroke-width="1.0"/>
<rect x="1038.4" y="712.9" width="13.6" height="7.5" fill="#e8a0b8" />
<rect x="1038.4" y="712.9" width="13.6" height="7.5" fill="none" stroke="#e0dcd0" stroke-width="1.0"/>
<rect x="1061" y="712.9" width="12.9" height="7.5" fill="#507080" />
<rect x="1061" y="712.9" width="12.9" height="7.5" fill="none" stroke="#e0dcd0" stroke-width="1.0"/>
<rect x="1088" y="710" width="8.7" height="10.3" fill="#a08060" />
<rect x="1088" y="710" width="8.7" height="10.3" fill="none" stroke="#e0dcd0" stroke-width="1.0"/>
<rect x="1104" y="710" width="10.2" height="10.3" fill="#d8c838" />
<rect x="1104" y="710" width="10.2" height="10.3" fill="none" stroke="#e0dcd0" stroke-width="1.0"/>
<rect x="1017.9" y="692.5" width="11.7" height="11.7" fill="#c8c040" />
<rect x="1017.9" y="692.5" width="11.7" height="11.7" fill="none" stroke="#e0dcd0" stroke-width="1.0"/>
<rect x="1034" y="662" width="8.7" height="17.4" fill="#c8c040" />
<rect x="1034" y="662" width="8.7" height="17.4" fill="none" stroke="#e0dcd0" stroke-width="1.0"/>
<rect x="1067.5" y="701.3" width="7.5" height="7.3" fill="#a03820" />
<rect x="1067.5" y="701.3" width="7.5" height="7.3" fill="none" stroke="#e0dcd0" stroke-width="1.0"/>
<rect x="1075" y="703" width="7" height="4" fill="#e0e0d0" />
<rect x="1075" y="703" width="7" height="4" fill="none" stroke="#e0dcd0" stroke-width="1.0"/>
<rect x="799" y="671.7" width="12.7" height="10.8" fill="#c08050" />
<rect x="799" y="671.7" width="3.81" height="10.8" fill="#e04020" />
<rect x="799" y="671.7" width="12.7" height="10.8" fill="none" stroke="#e0dcd0" stroke-width="1.0"/>
<rect x="813" y="666.7" width="7" height="13.3" fill="#d0d0c0" />
<rect x="813" y="666.7" width="7" height="13.3" fill="none" stroke="#e0dcd0" stroke-width="1.0"/>
<rect x="820" y="666" width="6" height="6" fill="#a0d8e8" />
<rect x="820" y="666" width="6" height="6" fill="none" stroke="#e0dcd0" stroke-width="1.0"/>
<rect x="831" y="708.6" width="10.3" height="11.7" fill="#38a8e0" />
<rect x="831" y="708.6" width="10.3" height="11.7" fill="none" stroke="#e0dcd0" stroke-width="1.0"/>
<rect x="847.7" y="710" width="9.7" height="10.3" fill="#b08040" />
<rect x="847.7" y="710" width="9.7" height="10.3" fill="none" stroke="#e0dcd0" stroke-width="1.0"/>
<rect x="780.5" y="686.7" width="11.2" height="33.6" fill="#8d7a48" />
<rect x="780.5" y="686.7" width="11.2" height="33.6" fill="none" stroke="#e0dcd0" stroke-width="1.0"/>
<rect x="821" y="309" width="13.6" height="7" fill="#9a9ac0" />
<rect x="821" y="309" width="13.6" height="7" fill="none" stroke="#e0dcd0" stroke-width="1.0"/>
<rect x="842.8" y="309" width="14.0" height="7" fill="#e8a090" />
<rect x="842.8" y="309" width="14.0" height="7" fill="none" stroke="#e0dcd0" stroke-width="1.0"/>
<rect x="866" y="309.8" width="13" height="5.2" fill="#4a6050" />
<rect x="866" y="309.8" width="13" height="5.2" fill="none" stroke="#e0dcd0" stroke-width="1.0"/>
<rect x="1035.5" y="582.4" width="5.5" height="12.3" fill="#e8a8c0" />
<rect x="1035.5" y="582.4" width="5.5" height="12.3" fill="none" stroke="#e0dcd0" stroke-width="1.0"/>
<rect x="425" y="463" width="8" height="23" fill="#b09050" />
<rect x="425" y="463" width="8" height="6.9" fill="#e0c0d0" />
<rect x="425" y="463" width="8" height="23" fill="none" stroke="#e0dcd0" stroke-width="1.0"/>
<rect x="436" y="467" width="7" height="19" fill="#c0a060" />
<rect x="436" y="467" width="7" height="5.7" fill="#e0e0e0" />
<rect x="436" y="467" width="7" height="19" fill="none" stroke="#e0dcd0" stroke-width="1.0"/>
<rect x="500" y="467" width="12" height="8" fill="#dde0e0" />
<rect x="500" y="467" width="12" height="8" fill="none" stroke="#e0dcd0" stroke-width="1.0"/>
<rect x="546" y="467" width="15" height="8" fill="#a06040" />
<rect x="546" y="467" width="15" height="8" fill="none" stroke="#e0dcd0" stroke-width="1.0"/>
<circle cx="674" cy="503.5" r="8" fill="#3a5a5c" />
<rect x="661" y="493.5" width="2.5" height="4.5" fill="#e03020" />
<rect x="661" y="510" width="2.5" height="4.5" fill="#a0a040" />
<rect x="665" y="493.5" width="2.5" height="4.5" fill="#c06030" />
<rect x="665" y="510" width="2.5" height="4.5" fill="#60b0c0" />
<rect x="669" y="493.5" width="2.5" height="4.5" fill="#60b0c0" />
<rect x="669" y="510" width="2.5" height="4.5" fill="#d0a040" />
<rect x="673" y="493.5" width="2.5" height="4.5" fill="#c0a090" />
<rect x="673" y="510" width="2.5" height="4.5" fill="#e03020" />
<rect x="677" y="493.5" width="2.5" height="4.5" fill="#e03020" />
<rect x="677" y="510" width="2.5" height="4.5" fill="#d0a040" />
<rect x="681" y="493.5" width="2.5" height="4.5" fill="#e02020" />
<rect x="681" y="510" width="2.5" height="4.5" fill="#c06030" />
<rect x="685" y="493.5" width="2.5" height="4.5" fill="#e03020" />
<rect x="685" y="510" width="2.5" height="4.5" fill="#e01040" />
<rect x="417.2" y="317.8" width="6.8" height="4.2" fill="#e0d0a0" />
<rect x="417.2" y="317.8" width="6.8" height="4.2" fill="none" stroke="#e0dcd0" stroke-width="1.0"/>
<path d="M424,320 H432" stroke="#d8c830" stroke-width="1.2"/>
<rect x="896.7" y="687.5" width="35.0" height="13.0" fill="#2d5054" />
<rect x="896.7" y="687.5" width="2.8" height="13.0" fill="#d07040" />
<rect x="929" y="687.5" width="2.7" height="13.0" fill="#d07040" />
<rect x="896.7" y="687.5" width="35.0" height="13.0" fill="none" stroke="#d8d8d0" stroke-width="1.2"/>
<rect x="896.7" y="703.3" width="35.0" height="13.0" fill="#2d5054" />
<rect x="896.7" y="703.3" width="2.8" height="13.0" fill="#d07040" />
<rect x="929" y="703.3" width="2.7" height="13.0" fill="#d07040" />
<rect x="896.7" y="703.3" width="35.0" height="13.0" fill="none" stroke="#d8d8d0" stroke-width="1.2"/>
<rect x="667" y="340" width="12" height="7" fill="#20b0c0" />
<rect x="667" y="340" width="12" height="7" fill="none" stroke="#e0dcd0" stroke-width="1.0"/>
<rect x="686.8" y="340" width="12.4" height="7" fill="#a09868" />
<rect x="686.8" y="340" width="12.4" height="7" fill="none" stroke="#e0dcd0" stroke-width="1.0"/>
<rect x="727.5" y="338" width="3.9" height="8" fill="#e0d8c0" />
<rect x="727.5" y="338" width="3.9" height="8" fill="none" stroke="#e0dcd0" stroke-width="1.0"/>
<rect x="873.0" y="703.1" width="5.0" height="5.0" fill="#a07060" />
<rect x="873.0" y="703.1" width="5.0" height="5.0" fill="none" stroke="#e0dcd0" stroke-width="0.8"/>
<rect x="885.6" y="694.7" width="5.0" height="4.0" fill="#e09090" />
<rect x="885.6" y="694.7" width="5.0" height="4.0" fill="none" stroke="#e0dcd0" stroke-width="0.8"/>
<rect x="885.6" y="699.9" width="5.0" height="5.0" fill="#e09090" />
<rect x="885.6" y="699.9" width="5.0" height="5.0" fill="none" stroke="#e0dcd0" stroke-width="0.8"/>
<rect x="888.0" y="697.7" width="5.0" height="5.0" fill="#c0a070" />
<rect x="888.0" y="697.7" width="5.0" height="5.0" fill="none" stroke="#e0dcd0" stroke-width="0.8"/>
<rect x="879.6" y="696.1" width="4.0" height="3.0" fill="#c0a070" />
<rect x="879.6" y="696.1" width="4.0" height="3.0" fill="none" stroke="#e0dcd0" stroke-width="0.8"/>
<rect x="886.9" y="698.1" width="6.0" height="4.0" fill="#d0d0c0" />
<rect x="886.9" y="698.1" width="6.0" height="4.0" fill="none" stroke="#e0dcd0" stroke-width="0.8"/>
<rect x="873.7" y="711.4" width="8.0" height="5.0" fill="#a0c0d0" />
<rect x="873.7" y="711.4" width="8.0" height="5.0" fill="none" stroke="#e0dcd0" stroke-width="0.8"/>
<rect x="869.3" y="713.1" width="3.0" height="4.0" fill="#d0d0c0" />
<rect x="869.3" y="713.1" width="3.0" height="4.0" fill="none" stroke="#e0dcd0" stroke-width="0.8"/>
<rect x="873.0" y="697.1" width="6.0" height="4.0" fill="#a07060" />
<rect x="873.0" y="697.1" width="6.0" height="4.0" fill="none" stroke="#e0dcd0" stroke-width="0.8"/>
<rect x="872.1" y="708.1" width="5.0" height="8.0" fill="#c0a070" />
<rect x="872.1" y="708.1" width="5.0" height="8.0" fill="none" stroke="#e0dcd0" stroke-width="0.8"/>
<rect x="867.2" y="709.5" width="6.0" height="5.0" fill="#a07060" />
<rect x="867.2" y="709.5" width="6.0" height="5.0" fill="none" stroke="#e0dcd0" stroke-width="0.8"/>
<rect x="880.7" y="712.7" width="4.0" height="5.0" fill="#a0c0d0" />
<rect x="880.7" y="712.7" width="4.0" height="5.0" fill="none" stroke="#e0dcd0" stroke-width="0.8"/>
<rect x="887.8" y="711.8" width="3.0" height="6.0" fill="#c0a070" />
<rect x="887.8" y="711.8" width="3.0" height="6.0" fill="none" stroke="#e0dcd0" stroke-width="0.8"/>
<rect x="866.9" y="695.9" width="6.0" height="3.0" fill="#d0d0c0" />
<rect x="866.9" y="695.9" width="6.0" height="3.0" fill="none" stroke="#e0dcd0" stroke-width="0.8"/>
<rect x="884.3" y="698.2" width="4.0" height="3.0" fill="#a07060" />
<rect x="884.3" y="698.2" width="4.0" height="3.0" fill="none" stroke="#e0dcd0" stroke-width="0.8"/>
<rect x="888.5" y="700.6" width="6.0" height="5.0" fill="#c0a070" />
<rect x="888.5" y="700.6" width="6.0" height="5.0" fill="none" stroke="#e0dcd0" stroke-width="0.8"/>
<rect x="880.4" y="688.8" width="3.0" height="6.0" fill="#e09090" />
<rect x="880.4" y="688.8" width="3.0" height="6.0" fill="none" stroke="#e0dcd0" stroke-width="0.8"/>
<rect x="866.7" y="689.1" width="8.0" height="4.0" fill="#a0c0d0" />
<rect x="866.7" y="689.1" width="8.0" height="4.0" fill="none" stroke="#e0dcd0" stroke-width="0.8"/>
<rect x="984.5" y="661.0" width="7.5" height="4.0" fill="#e0d8c0" />
<rect x="984.5" y="661.0" width="7.5" height="4.0" fill="none" stroke="#e0dcd0" stroke-width="0.9"/>
<rect x="984.5" y="667.2" width="7.5" height="4.0" fill="#e0d8c0" />
<rect x="984.5" y="667.2" width="7.5" height="4.0" fill="none" stroke="#e0dcd0" stroke-width="0.9"/>
<rect x="984.5" y="673.4" width="7.5" height="4.0" fill="#e0d8c0" />
<rect x="984.5" y="673.4" width="7.5" height="4.0" fill="none" stroke="#e0dcd0" stroke-width="0.9"/>
<rect x="984.5" y="679.6" width="7.5" height="4.0" fill="#e0d8c0" />
<rect x="984.5" y="679.6" width="7.5" height="4.0" fill="none" stroke="#e0dcd0" stroke-width="0.9"/>
<rect x="984.5" y="685.8" width="7.5" height="4.0" fill="#e0d8c0" />
<rect x="984.5" y="685.8" width="7.5" height="4.0" fill="none" stroke="#e0dcd0" stroke-width="0.9"/>
<rect x="984.5" y="692.0" width="7.5" height="4.0" fill="#e0d8c0" />
<rect x="984.5" y="692.0" width="7.5" height="4.0" fill="none" stroke="#e0dcd0" stroke-width="0.9"/>
<rect x="984.5" y="698.2" width="7.5" height="4.0" fill="#e0d8c0" />
<rect x="984.5" y="698.2" width="7.5" height="4.0" fill="none" stroke="#e0dcd0" stroke-width="0.9"/>
<rect x="994" y="675.0" width="7.5" height="4.0" fill="#e0d0d0" />
<rect x="994" y="675.0" width="7.5" height="4.0" fill="none" stroke="#e0dcd0" stroke-width="0.9"/>
<rect x="994" y="681.5" width="7.5" height="4.0" fill="#e0d0d0" />
<rect x="994" y="681.5" width="7.5" height="4.0" fill="none" stroke="#e0dcd0" stroke-width="0.9"/>
<rect x="994" y="688.0" width="7.5" height="4.0" fill="#e0d0d0" />
<rect x="994" y="688.0" width="7.5" height="4.0" fill="none" stroke="#e0dcd0" stroke-width="0.9"/>
<rect x="994" y="694.5" width="7.5" height="4.0" fill="#e0d0d0" />
<rect x="994" y="694.5" width="7.5" height="4.0" fill="none" stroke="#e0dcd0" stroke-width="0.9"/>
<rect x="955" y="688" width="8" height="4" fill="#e0e0c0" />
<rect x="955" y="688" width="8" height="4" fill="none" stroke="#e0dcd0" stroke-width="0.9"/>
<rect x="955" y="693" width="8" height="4" fill="#e0e0c0" />
<rect x="955" y="693" width="8" height="4" fill="none" stroke="#e0dcd0" stroke-width="0.9"/>
<rect x="955" y="698" width="8" height="4" fill="#e0e0c0" />
<rect x="955" y="698" width="8" height="4" fill="none" stroke="#e0dcd0" stroke-width="0.9"/>
<rect x="931.8" y="688" width="7.2" height="5" fill="#e0e0c0" />
<rect x="931.8" y="688" width="7.2" height="5" fill="none" stroke="#e0dcd0" stroke-width="0.9"/>
<rect x="931.8" y="695" width="7.2" height="5" fill="#e0e0c0" />
<rect x="931.8" y="695" width="7.2" height="5" fill="none" stroke="#e0dcd0" stroke-width="0.9"/>
<rect x="931.8" y="702" width="7.2" height="5" fill="#e0e0c0" />
<rect x="931.8" y="702" width="7.2" height="5" fill="none" stroke="#e0dcd0" stroke-width="0.9"/>
<rect x="931.8" y="709" width="7.2" height="5" fill="#e0e0c0" />
<rect x="931.8" y="709" width="7.2" height="5" fill="none" stroke="#e0dcd0" stroke-width="0.9"/>
<path d="M944,684 L944,672 Q944,666 950,666 L976,666 M980,668 L1010,668 L1010,700 L1000,706" fill="none" stroke="#8ac8e0" stroke-width="1"/>
<path d="M826,675 L835,690 L836,708" fill="none" stroke="#c8e0e8" stroke-width="1.5"/>
<rect x="925.5" y="406.7" width="6.0" height="4.0" fill="#e0a040" />
<rect x="925.5" y="406.7" width="6.0" height="4.0" fill="none" stroke="#e0dcd0" stroke-width="0.8"/>
<rect x="916.8" y="398.1" width="8.0" height="5.0" fill="#e02030" />
<rect x="916.8" y="398.1" width="8.0" height="5.0" fill="none" stroke="#e0dcd0" stroke-width="0.8"/>
<rect x="919.3" y="424.0" width="6.0" height="4.0" fill="#e0a040" />
<rect x="919.3" y="424.0" width="6.0" height="4.0" fill="none" stroke="#e0dcd0" stroke-width="0.8"/>
<rect x="906.9" y="417.9" width="5.0" height="6.0" fill="#e02030" />
<rect x="906.9" y="417.9" width="5.0" height="6.0" fill="none" stroke="#e0dcd0" stroke-width="0.8"/>
<rect x="916.8" y="398.9" width="3.0" height="6.0" fill="#e02030" />
<rect x="916.8" y="398.9" width="3.0" height="6.0" fill="none" stroke="#e0dcd0" stroke-width="0.8"/>
<rect x="928.0" y="412.7" width="4.0" height="6.0" fill="#e0a040" />
<rect x="928.0" y="412.7" width="4.0" height="6.0" fill="none" stroke="#e0dcd0" stroke-width="0.8"/>
<rect x="925.6" y="395.7" width="8.0" height="3.0" fill="#e0a040" />
<rect x="925.6" y="395.7" width="8.0" height="3.0" fill="none" stroke="#e0dcd0" stroke-width="0.8"/>
<rect x="915.2" y="404.6" width="6.0" height="5.0" fill="#e0a040" />
<rect x="915.2" y="404.6" width="6.0" height="5.0" fill="none" stroke="#e0dcd0" stroke-width="0.8"/>
<rect x="1040" y="440" width="3.5" height="39" fill="#a0a848" />
<rect x="925.4" y="314.7" width="2.6" height="2.6" fill="#0a0a0a"/>
<rect x="932.2" y="314.7" width="2.6" height="2.6" fill="#0a0a0a"/>
<rect x="939.0" y="314.7" width="2.6" height="2.6" fill="#0a0a0a"/>
<rect x="946.3" y="314.7" width="2.6" height="2.6" fill="#0a0a0a"/>
<rect x="921.1" y="321.4" width="2.6" height="2.6" fill="#0a0a0a"/>
<rect x="928.1" y="321.4" width="2.6" height="2.6" fill="#0a0a0a"/>
<rect x="935.2" y="321.4" width="2.6" height="2.6" fill="#0a0a0a"/>
<rect x="921.1" y="340.4" width="2.6" height="2.6" fill="#0a0a0a"/>
<rect x="928.1" y="340.4" width="2.6" height="2.6" fill="#0a0a0a"/>
<rect x="936.0" y="362.3" width="2.6" height="2.6" fill="#0a0a0a"/>
<rect x="922.0" y="369.7" width="2.6" height="2.6" fill="#0a0a0a"/>
<rect x="929.2" y="369.7" width="2.6" height="2.6" fill="#0a0a0a"/>
<rect x="936.3" y="369.7" width="2.6" height="2.6" fill="#0a0a0a"/>
<rect x="922.0" y="375.7" width="2.6" height="2.6" fill="#0a0a0a"/>
<rect x="929.2" y="375.7" width="2.6" height="2.6" fill="#0a0a0a"/>
<rect x="936.3" y="375.7" width="2.6" height="2.6" fill="#0a0a0a"/>
<rect x="922.0" y="382.5" width="2.6" height="2.6" fill="#0a0a0a"/>
<rect x="929.2" y="382.5" width="2.6" height="2.6" fill="#0a0a0a"/>
<rect x="936.3" y="382.5" width="2.6" height="2.6" fill="#0a0a0a"/>
<rect x="1010.3" y="314.1" width="2.6" height="2.6" fill="#0a0a0a"/>
<rect x="1040.5" y="314.1" width="2.6" height="2.6" fill="#0a0a0a"/>
<rect x="1047.3" y="314.1" width="2.6" height="2.6" fill="#0a0a0a"/>
<rect x="1053.5" y="314.1" width="2.6" height="2.6" fill="#0a0a0a"/>
<rect x="1083.7" y="314.1" width="2.6" height="2.6" fill="#0a0a0a"/>
<rect x="1090.5" y="314.1" width="2.6" height="2.6" fill="#0a0a0a"/>
<rect x="1096.7" y="314.1" width="2.6" height="2.6" fill="#0a0a0a"/>
<rect x="1128.9" y="314.1" width="2.6" height="2.6" fill="#0a0a0a"/>
<rect x="1025.1" y="322.4" width="2.6" height="2.6" fill="#0a0a0a"/>
<rect x="1068.3" y="322.4" width="2.6" height="2.6" fill="#0a0a0a"/>
<rect x="1111.5" y="322.4" width="2.6" height="2.6" fill="#0a0a0a"/>
<rect x="1047.3" y="321.3" width="2.6" height="2.6" fill="#0a0a0a"/>
<rect x="1090.5" y="321.3" width="2.6" height="2.6" fill="#0a0a0a"/>
<rect x="1025.1" y="339.4" width="2.6" height="2.6" fill="#0a0a0a"/>
<rect x="1068.3" y="339.4" width="2.6" height="2.6" fill="#0a0a0a"/>
<rect x="1111.5" y="339.4" width="2.6" height="2.6" fill="#0a0a0a"/>
<rect x="1132.7" y="334.7" width="2.6" height="2.6" fill="#0a0a0a"/>
<rect x="1142.7" y="334.7" width="2.6" height="2.6" fill="#0a0a0a"/>
<rect x="1134.7" y="345.7" width="2.6" height="2.6" fill="#0a0a0a"/>
<rect x="1135.7" y="353.7" width="2.6" height="2.6" fill="#0a0a0a"/>
<rect x="1142.7" y="355.3" width="2.6" height="2.6" fill="#0a0a0a"/>
<rect x="1150.1" y="355.3" width="2.6" height="2.6" fill="#0a0a0a"/>
<rect x="1047.3" y="354.2" width="2.6" height="2.6" fill="#0a0a0a"/>
<rect x="1058.0" y="354.2" width="2.6" height="2.6" fill="#0a0a0a"/>
<rect x="1068.3" y="354.2" width="2.6" height="2.6" fill="#0a0a0a"/>
<rect x="1078.6" y="354.2" width="2.6" height="2.6" fill="#0a0a0a"/>
<rect x="1101.2" y="354.2" width="2.6" height="2.6" fill="#0a0a0a"/>
<rect x="1111.1" y="354.2" width="2.6" height="2.6" fill="#0a0a0a"/>
<rect x="1121.3" y="354.2" width="2.6" height="2.6" fill="#0a0a0a"/>
<rect x="1041.5" y="360.4" width="2.6" height="2.6" fill="#0a0a0a"/>
<rect x="1064.2" y="360.4" width="2.6" height="2.6" fill="#0a0a0a"/>
<rect x="1073.4" y="360.4" width="2.6" height="2.6" fill="#0a0a0a"/>
<rect x="1096.7" y="360.4" width="2.6" height="2.6" fill="#0a0a0a"/>
<rect x="1106.3" y="360.4" width="2.6" height="2.6" fill="#0a0a0a"/>
<rect x="1116.7" y="360.4" width="2.6" height="2.6" fill="#0a0a0a"/>
<rect x="1103.2" y="377.5" width="2.6" height="2.6" fill="#0a0a0a"/>
<rect x="1103.2" y="387.6" width="2.6" height="2.6" fill="#0a0a0a"/>
<rect x="1103.2" y="397.4" width="2.6" height="2.6" fill="#0a0a0a"/>
<rect x="1103.2" y="412.4" width="2.6" height="2.6" fill="#0a0a0a"/>
<rect x="1103.2" y="422.1" width="2.6" height="2.6" fill="#0a0a0a"/>
<rect x="1103.2" y="432.0" width="2.6" height="2.6" fill="#0a0a0a"/>
<rect x="1109.4" y="382.6" width="2.6" height="2.6" fill="#0a0a0a"/>
<rect x="1109.4" y="392.7" width="2.6" height="2.6" fill="#0a0a0a"/>
<rect x="1109.4" y="402.6" width="2.6" height="2.6" fill="#0a0a0a"/>
<rect x="1109.4" y="417.0" width="2.6" height="2.6" fill="#0a0a0a"/>
<rect x="1109.4" y="426.8" width="2.6" height="2.6" fill="#0a0a0a"/>
<rect x="1150.1" y="362.5" width="2.6" height="2.6" fill="#0a0a0a"/>
<rect x="1150.1" y="393.7" width="2.6" height="2.6" fill="#0a0a0a"/>
<rect x="1150.1" y="407.7" width="2.6" height="2.6" fill="#0a0a0a"/>
<rect x="1150.1" y="436.9" width="2.6" height="2.6" fill="#0a0a0a"/>
<rect x="1142.7" y="400.5" width="2.6" height="2.6" fill="#0a0a0a"/>
<rect x="1149.7" y="400.5" width="2.6" height="2.6" fill="#0a0a0a"/>
<rect x="1136.3" y="443.7" width="2.6" height="2.6" fill="#0a0a0a"/>
<rect x="1143.1" y="443.7" width="2.6" height="2.6" fill="#0a0a0a"/>
<rect x="1149.7" y="443.7" width="2.6" height="2.6" fill="#0a0a0a"/>
<rect x="1136.3" y="450.9" width="2.6" height="2.6" fill="#0a0a0a"/>
<rect x="1143.1" y="450.9" width="2.6" height="2.6" fill="#0a0a0a"/>
<rect x="1149.7" y="450.9" width="2.6" height="2.6" fill="#0a0a0a"/>
<rect x="1050.6" y="450.3" width="2.6" height="2.6" fill="#0a0a0a"/>
<rect x="1063.7" y="450.3" width="2.6" height="2.6" fill="#0a0a0a"/>
<rect x="1076.7" y="450.3" width="2.6" height="2.6" fill="#0a0a0a"/>
<rect x="1090.7" y="450.3" width="2.6" height="2.6" fill="#0a0a0a"/>
<rect x="1103.8" y="450.3" width="2.6" height="2.6" fill="#0a0a0a"/>
<rect x="1050.6" y="460.0" width="2.6" height="2.6" fill="#0a0a0a"/>
<rect x="1063.7" y="460.0" width="2.6" height="2.6" fill="#0a0a0a"/>
<rect x="1076.7" y="460.0" width="2.6" height="2.6" fill="#0a0a0a"/>
<rect x="1090.7" y="460.0" width="2.6" height="2.6" fill="#0a0a0a"/>
<rect x="1103.8" y="460.0" width="2.6" height="2.6" fill="#0a0a0a"/>
<rect x="1050.6" y="469.8" width="2.6" height="2.6" fill="#0a0a0a"/>
<rect x="1063.7" y="469.8" width="2.6" height="2.6" fill="#0a0a0a"/>
<rect x="1076.7" y="469.8" width="2.6" height="2.6" fill="#0a0a0a"/>
<rect x="1090.7" y="469.8" width="2.6" height="2.6" fill="#0a0a0a"/>
<rect x="1103.8" y="469.8" width="2.6" height="2.6" fill="#0a0a0a"/>
<rect x="1056.7" y="455.4" width="2.6" height="2.6" fill="#0a0a0a"/>
<rect x="1070.5" y="455.4" width="2.6" height="2.6" fill="#0a0a0a"/>
<rect x="1083.5" y="455.4" width="2.6" height="2.6" fill="#0a0a0a"/>
<rect x="1096.6" y="455.4" width="2.6" height="2.6" fill="#0a0a0a"/>
<rect x="1056.7" y="465.1" width="2.6" height="2.6" fill="#0a0a0a"/>
<rect x="1070.5" y="465.1" width="2.6" height="2.6" fill="#0a0a0a"/>
<rect x="1083.5" y="465.1" width="2.6" height="2.6" fill="#0a0a0a"/>
<rect x="1096.6" y="465.1" width="2.6" height="2.6" fill="#0a0a0a"/>
<rect x="1056.7" y="475.0" width="2.6" height="2.6" fill="#0a0a0a"/>
<rect x="1070.5" y="475.0" width="2.6" height="2.6" fill="#0a0a0a"/>
<rect x="1083.5" y="475.0" width="2.6" height="2.6" fill="#0a0a0a"/>
<rect x="1096.6" y="475.0" width="2.6" height="2.6" fill="#0a0a0a"/>
<rect x="1103.4" y="431.7" width="2.6" height="2.6" fill="#0a0a0a"/>
<rect x="1123.4" y="455.4" width="2.6" height="2.6" fill="#0a0a0a"/>
<rect x="1067.8" y="513.6" width="2.6" height="2.6" fill="#0a0a0a"/>
<rect x="1080.7" y="513.6" width="2.6" height="2.6" fill="#0a0a0a"/>
<rect x="1093.8" y="513.6" width="2.6" height="2.6" fill="#0a0a0a"/>
<rect x="1106.8" y="513.6" width="2.6" height="2.6" fill="#0a0a0a"/>
<rect x="1120.8" y="513.6" width="2.6" height="2.6" fill="#0a0a0a"/>
<rect x="1133.8" y="513.6" width="2.6" height="2.6" fill="#0a0a0a"/>
<rect x="1067.8" y="524.1" width="2.6" height="2.6" fill="#0a0a0a"/>
<rect x="1080.7" y="524.1" width="2.6" height="2.6" fill="#0a0a0a"/>
<rect x="1093.8" y="524.1" width="2.6" height="2.6" fill="#0a0a0a"/>
<rect x="1106.8" y="524.1" width="2.6" height="2.6" fill="#0a0a0a"/>
<rect x="1120.8" y="524.1" width="2.6" height="2.6" fill="#0a0a0a"/>
<rect x="1133.8" y="524.1" width="2.6" height="2.6" fill="#0a0a0a"/>
<rect x="1073.6" y="519.0" width="2.6" height="2.6" fill="#0a0a0a"/>
<rect x="1087.6" y="519.0" width="2.6" height="2.6" fill="#0a0a0a"/>
<rect x="1100.6" y="519.0" width="2.6" height="2.6" fill="#0a0a0a"/>
<rect x="1113.7" y="519.0" width="2.6" height="2.6" fill="#0a0a0a"/>
<rect x="1126.7" y="519.0" width="2.6" height="2.6" fill="#0a0a0a"/>
<rect x="1139.8" y="519.0" width="2.6" height="2.6" fill="#0a0a0a"/>
<rect x="1073.6" y="529.2" width="2.6" height="2.6" fill="#0a0a0a"/>
<rect x="1087.6" y="529.2" width="2.6" height="2.6" fill="#0a0a0a"/>
<rect x="1100.6" y="529.2" width="2.6" height="2.6" fill="#0a0a0a"/>
<rect x="1113.7" y="529.2" width="2.6" height="2.6" fill="#0a0a0a"/>
<rect x="1126.7" y="529.2" width="2.6" height="2.6" fill="#0a0a0a"/>
<rect x="1139.8" y="529.2" width="2.6" height="2.6" fill="#0a0a0a"/>
<rect x="1067.6" y="606.1" width="2.6" height="2.6" fill="#0a0a0a"/>
<rect x="1080.7" y="606.1" width="2.6" height="2.6" fill="#0a0a0a"/>
<rect x="1093.7" y="606.1" width="2.6" height="2.6" fill="#0a0a0a"/>
<rect x="1120.7" y="606.1" width="2.6" height="2.6" fill="#0a0a0a"/>
<rect x="1133.7" y="606.1" width="2.6" height="2.6" fill="#0a0a0a"/>
<rect x="1073.6" y="611.3" width="2.6" height="2.6" fill="#0a0a0a"/>
<rect x="1087.7" y="611.3" width="2.6" height="2.6" fill="#0a0a0a"/>
<rect x="1100.7" y="611.3" width="2.6" height="2.6" fill="#0a0a0a"/>
<rect x="1113.7" y="611.3" width="2.6" height="2.6" fill="#0a0a0a"/>
<rect x="1126.7" y="611.3" width="2.6" height="2.6" fill="#0a0a0a"/>
<rect x="1139.7" y="611.3" width="2.6" height="2.6" fill="#0a0a0a"/>
<rect x="1067.6" y="616.4" width="2.6" height="2.6" fill="#0a0a0a"/>
<rect x="1080.7" y="616.4" width="2.6" height="2.6" fill="#0a0a0a"/>
<rect x="1093.7" y="616.4" width="2.6" height="2.6" fill="#0a0a0a"/>
<rect x="1106.7" y="616.4" width="2.6" height="2.6" fill="#0a0a0a"/>
<rect x="1120.7" y="616.4" width="2.6" height="2.6" fill="#0a0a0a"/>
<rect x="1133.7" y="616.4" width="2.6" height="2.6" fill="#0a0a0a"/>
<rect x="1146.7" y="616.4" width="2.6" height="2.6" fill="#0a0a0a"/>
<rect x="1073.6" y="621.3" width="2.6" height="2.6" fill="#0a0a0a"/>
<rect x="1087.7" y="621.3" width="2.6" height="2.6" fill="#0a0a0a"/>
<rect x="1100.7" y="621.3" width="2.6" height="2.6" fill="#0a0a0a"/>
<rect x="1113.7" y="621.3" width="2.6" height="2.6" fill="#0a0a0a"/>
<rect x="1126.7" y="621.3" width="2.6" height="2.6" fill="#0a0a0a"/>
<rect x="1139.7" y="621.3" width="2.6" height="2.6" fill="#0a0a0a"/>
<rect x="1093.7" y="626.5" width="2.6" height="2.6" fill="#0a0a0a"/>
<rect x="1106.7" y="626.5" width="2.6" height="2.6" fill="#0a0a0a"/>
<rect x="1120.7" y="626.5" width="2.6" height="2.6" fill="#0a0a0a"/>
<rect x="1146.7" y="626.5" width="2.6" height="2.6" fill="#0a0a0a"/>
<rect x="1060.7" y="630.1" width="2.6" height="2.6" fill="#0a0a0a"/>
<rect x="1060.7" y="640.4" width="2.6" height="2.6" fill="#0a0a0a"/>
<rect x="1060.7" y="650.7" width="2.6" height="2.6" fill="#0a0a0a"/>
<rect x="1060.7" y="660.4" width="2.6" height="2.6" fill="#0a0a0a"/>
<rect x="1060.7" y="670.5" width="2.6" height="2.6" fill="#0a0a0a"/>
<rect x="1139.7" y="631.3" width="2.6" height="2.6" fill="#0a0a0a"/>
<rect x="1139.7" y="641.7" width="2.6" height="2.6" fill="#0a0a0a"/>
<rect x="1139.7" y="651.7" width="2.6" height="2.6" fill="#0a0a0a"/>
<rect x="1139.7" y="661.7" width="2.6" height="2.6" fill="#0a0a0a"/>
<rect x="1139.7" y="671.7" width="2.6" height="2.6" fill="#0a0a0a"/>
<rect x="1146.7" y="636.4" width="2.6" height="2.6" fill="#0a0a0a"/>
<rect x="1146.7" y="646.5" width="2.6" height="2.6" fill="#0a0a0a"/>
<rect x="1146.7" y="656.4" width="2.6" height="2.6" fill="#0a0a0a"/>
<rect x="1146.7" y="666.7" width="2.6" height="2.6" fill="#0a0a0a"/>
<rect x="1067.6" y="675.5" width="2.6" height="2.6" fill="#0a0a0a"/>
<rect x="1080.7" y="675.5" width="2.6" height="2.6" fill="#0a0a0a"/>
<rect x="1093.7" y="675.5" width="2.6" height="2.6" fill="#0a0a0a"/>
<rect x="1106.7" y="675.5" width="2.6" height="2.6" fill="#0a0a0a"/>
<rect x="1120.7" y="675.5" width="2.6" height="2.6" fill="#0a0a0a"/>
<rect x="1133.7" y="675.5" width="2.6" height="2.6" fill="#0a0a0a"/>
<rect x="1060.7" y="680.7" width="2.6" height="2.6" fill="#0a0a0a"/>
<rect x="1073.6" y="680.7" width="2.6" height="2.6" fill="#0a0a0a"/>
<rect x="1087.7" y="680.7" width="2.6" height="2.6" fill="#0a0a0a"/>
<rect x="1100.7" y="680.7" width="2.6" height="2.6" fill="#0a0a0a"/>
<rect x="1113.7" y="680.7" width="2.6" height="2.6" fill="#0a0a0a"/>
<rect x="1126.7" y="680.7" width="2.6" height="2.6" fill="#0a0a0a"/>
<rect x="1067.6" y="685.7" width="2.6" height="2.6" fill="#0a0a0a"/>
<rect x="1080.7" y="685.7" width="2.6" height="2.6" fill="#0a0a0a"/>
<rect x="1093.7" y="685.7" width="2.6" height="2.6" fill="#0a0a0a"/>
<rect x="1106.7" y="685.7" width="2.6" height="2.6" fill="#0a0a0a"/>
<rect x="1120.7" y="685.7" width="2.6" height="2.6" fill="#0a0a0a"/>
<rect x="1060.7" y="690.7" width="2.6" height="2.6" fill="#0a0a0a"/>
<rect x="1073.6" y="690.7" width="2.6" height="2.6" fill="#0a0a0a"/>
<rect x="1087.7" y="690.7" width="2.6" height="2.6" fill="#0a0a0a"/>
<rect x="1100.7" y="690.7" width="2.6" height="2.6" fill="#0a0a0a"/>
<rect x="1113.7" y="690.7" width="2.6" height="2.6" fill="#0a0a0a"/>
<rect x="1126.7" y="690.7" width="2.6" height="2.6" fill="#0a0a0a"/>
<rect x="1067.6" y="695.7" width="2.6" height="2.6" fill="#0a0a0a"/>
<rect x="1080.7" y="695.7" width="2.6" height="2.6" fill="#0a0a0a"/>
<rect x="1093.7" y="695.7" width="2.6" height="2.6" fill="#0a0a0a"/>
<rect x="1106.7" y="695.7" width="2.6" height="2.6" fill="#0a0a0a"/>
<rect x="1120.7" y="695.7" width="2.6" height="2.6" fill="#0a0a0a"/>
<rect x="896.7" y="448.7" width="2.6" height="2.6" fill="#0a0a0a"/>
<rect x="903.7" y="448.7" width="2.6" height="2.6" fill="#0a0a0a"/>
<rect x="896.7" y="455.7" width="2.6" height="2.6" fill="#0a0a0a"/>
<rect x="903.7" y="455.7" width="2.6" height="2.6" fill="#0a0a0a"/>
<rect x="903.7" y="462.7" width="2.6" height="2.6" fill="#0a0a0a"/>
<rect x="922.0" y="475.7" width="2.6" height="2.6" fill="#0a0a0a"/>
<rect x="929.0" y="475.7" width="2.6" height="2.6" fill="#0a0a0a"/>
<rect x="936.0" y="475.7" width="2.6" height="2.6" fill="#0a0a0a"/>
<rect x="922.0" y="482.7" width="2.6" height="2.6" fill="#0a0a0a"/>
<rect x="929.0" y="482.7" width="2.6" height="2.6" fill="#0a0a0a"/>
<rect x="936.0" y="482.7" width="2.6" height="2.6" fill="#0a0a0a"/>
<rect x="943.2" y="482.7" width="2.6" height="2.6" fill="#0a0a0a"/>
<rect x="922.0" y="493.1" width="2.6" height="2.6" fill="#0a0a0a"/>
<rect x="929.0" y="493.1" width="2.6" height="2.6" fill="#0a0a0a"/>
<rect x="926.2" y="518.7" width="2.6" height="2.6" fill="#0a0a0a"/>
<rect x="933.2" y="518.7" width="2.6" height="2.6" fill="#0a0a0a"/>
<rect x="940.2" y="518.7" width="2.6" height="2.6" fill="#0a0a0a"/>
<rect x="922.3" y="523.7" width="2.6" height="2.6" fill="#0a0a0a"/>
<rect x="922.3" y="530.7" width="2.6" height="2.6" fill="#0a0a0a"/>
<rect x="922.3" y="537.7" width="2.6" height="2.6" fill="#0a0a0a"/>
<rect x="922.3" y="544.7" width="2.6" height="2.6" fill="#0a0a0a"/>
<rect x="920.7" y="551.7" width="2.6" height="2.6" fill="#0a0a0a"/>
<rect x="923.7" y="558.7" width="2.6" height="2.6" fill="#0a0a0a"/>
<rect x="923.7" y="564.7" width="2.6" height="2.6" fill="#0a0a0a"/>
<rect x="896.7" y="314.7" width="2.6" height="2.6" fill="#0a0a0a"/>
<rect x="904.7" y="314.7" width="2.6" height="2.6" fill="#0a0a0a"/>
<circle cx="1058.9" cy="523.4" r="5" fill="#606858" />
<circle cx="1146.9" cy="594.3" r="5" fill="#2d5a60" />
<circle cx="1061.7" cy="615.4" r="5" fill="#2d5a60" />
<circle cx="1147.4" cy="687.4" r="5" fill="#2d5a60" />
<rect x="543.5" y="534" width="13.8" height="17" fill="#0a7050" />
<circle cx="549" cy="543" r="4" fill="#0a6050" />
<circle cx="549" cy="543" r="2" fill="#141414" />
<rect x="629.4" y="534" width="11.3" height="17" fill="#e050a8" />
<circle cx="635" cy="543" r="4" fill="#e070c0" />
<circle cx="635" cy="543" r="2" fill="#141414" />
<rect x="570" y="534" width="10" height="17" fill="#b04830" />
<circle cx="574" cy="543" r="4" fill="#c05030" />
<circle cx="574" cy="543" r="2" fill="#141414" />
<rect x="627" y="360" width="6" height="2.5" fill="#3a90c0" />
<rect x="627" y="364" width="6" height="2.5" fill="#a09080" />
<rect x="627" y="368" width="6" height="2.5" fill="#d0a040" />
<rect x="627" y="372" width="6" height="2.5" fill="#e04020" />
<rect x="627" y="376" width="6" height="2.5" fill="#d0a040" />
<rect x="627" y="380" width="6" height="2.5" fill="#10a0a0" />
<rect x="627" y="384" width="6" height="2.5" fill="#d0a040" />
<rect x="641" y="360" width="6" height="2.5" fill="#e04020" />
<rect x="641" y="364" width="6" height="2.5" fill="#a0a060" />
<rect x="641" y="368" width="6" height="2.5" fill="#a050a0" />
<rect x="641" y="372" width="6" height="2.5" fill="#908060" />
<rect x="641" y="376" width="6" height="2.5" fill="#e04020" />
<rect x="641" y="380" width="6" height="2.5" fill="#e04020" />
<rect x="641" y="384" width="6" height="2.5" fill="#e04020" />
<g opacity="0.15" fill="#c8b070">
<path d="M669,333 L697,333 L697,380 L738,380 L738,350 Q720,355 697,360 Z"/>
<rect x="677" y="405" width="23" height="40" rx="4"/>
<path d="M608,408 L660,408 L660,447 L608,447 Z"/>
<path d="M455,365 L500,365 L500,455 L455,455 Z"/>
</g>
<g fill="none" stroke="#b8a468" stroke-width="1.2" opacity="0.55">
<path d="M532,640 L600,711 M600,711 L645,672 L690,672 L735,711"/>
<path d="M690,600 L740,650 L775,650"/>
<path d="M664,598 L700,598 L700,660 L775,660"/>
</g>
</svg>
<div id="footer"><span style="position:relative;top:1.5px">Gem Design Technologies, Inc.</span></div>
<div id="sb">
  <svg class="a" style="left:4px;top:7px" width="9" height="5"><path d="M0,5 L4.5,0 L9,5Z" fill="#a3a3a3"/></svg>
  <svg class="a" style="left:4px;top:781px" width="9" height="5"><path d="M0,0 L4.5,5 L9,0Z" fill="#505050"/></svg>
</div>
<div id="thumb"></div>
<div id="frame"></div>
</body></html>
